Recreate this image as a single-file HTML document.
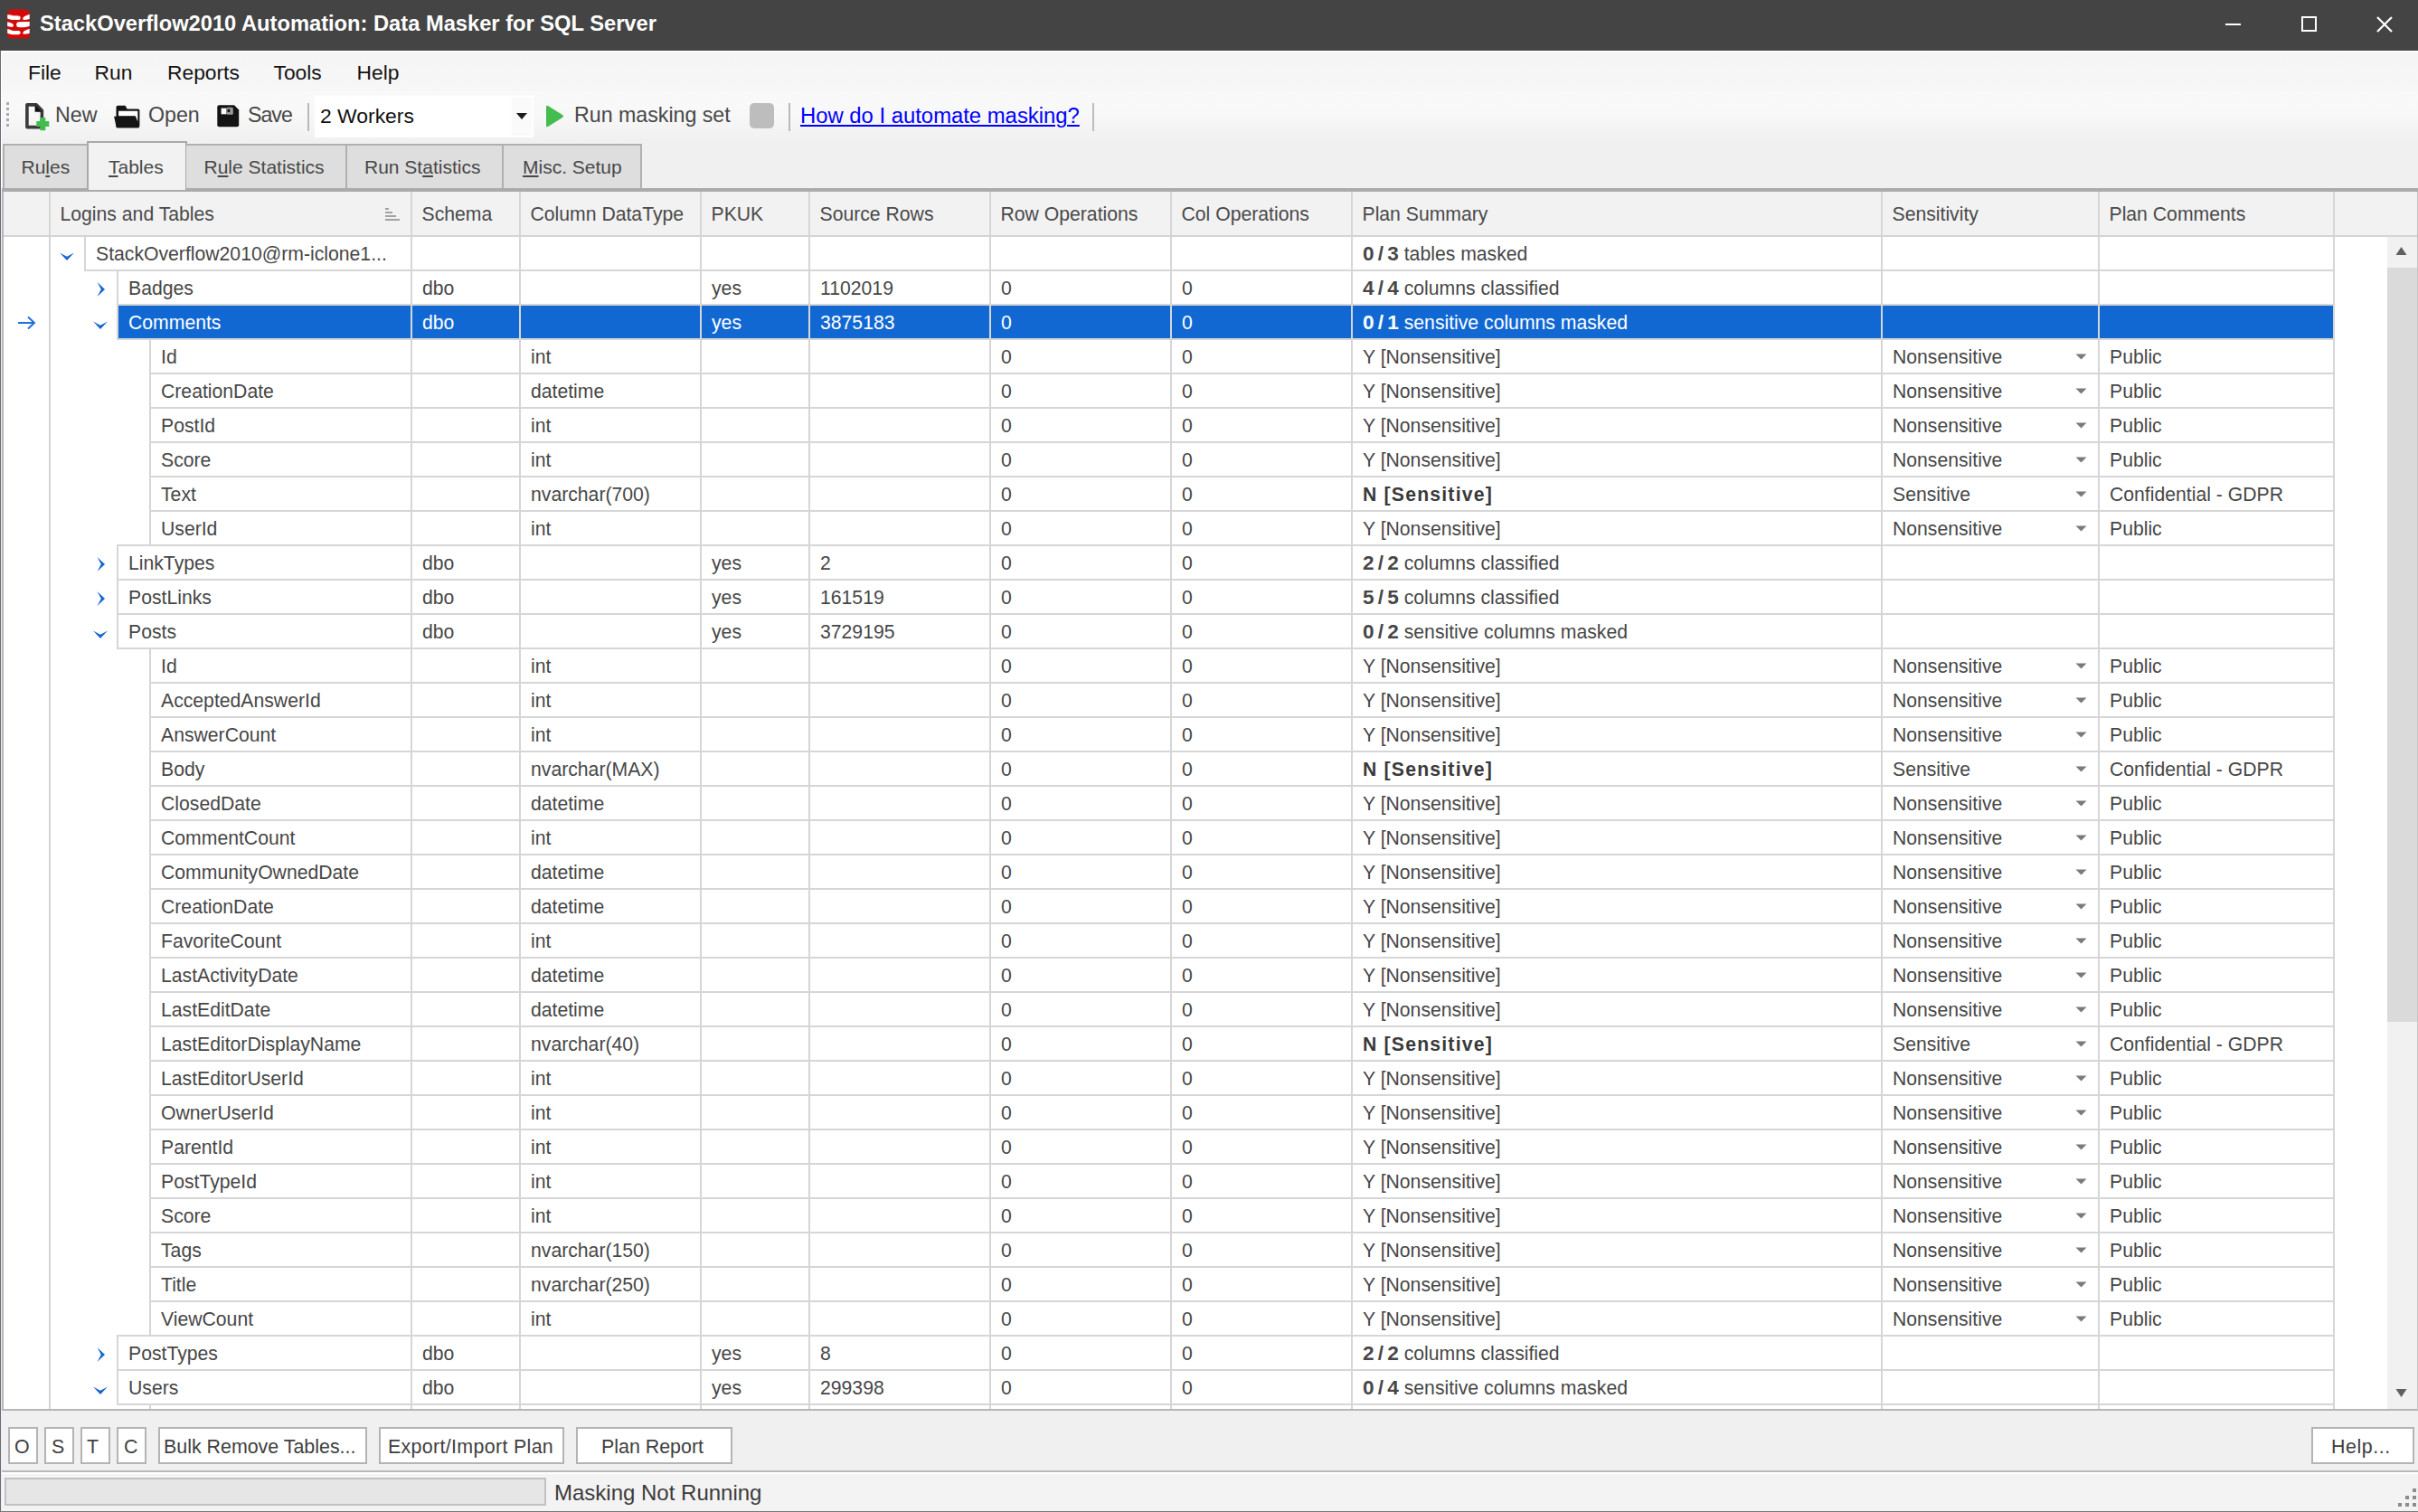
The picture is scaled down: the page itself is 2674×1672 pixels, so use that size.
<!DOCTYPE html><html><head><meta charset="utf-8"><style>
html,body{margin:0;padding:0;width:2674px;height:1672px;overflow:hidden;background:#f0f0f0;font-family:"Liberation Sans", sans-serif;}
div,span,svg{position:absolute;box-sizing:border-box;}
.t{white-space:nowrap;}
</style></head><body>
<div style="left:0px;top:0px;width:2674px;height:56px;background:#444444"></div>
<svg style="left:8px;top:10px" width="25" height="33" viewBox="0 0 25 33">
<path d="M3.5 0.3 L21.3 0.3 L24.7 3.8 L24.7 29.3 Q24.7 32.4 21 32.4 L4 32.4 Q0.2 32.4 0.2 29.3 L0.2 3.8 Z" fill="#d30a0a"/>
<g fill="#ffffff">
<path d="M0.2 6.3 Q3 5.8 6 7.3 L12.8 7.6 Q14.9 8 14.7 10.2 Q14.4 12.1 12.2 12.1 L6 12 Q3 11.8 0.2 10.6 Z"/>
<path d="M17.3 10.9 Q17.1 9 19.2 8.1 L24.7 5.8 L24.7 10.9 Q21 12 18.6 12 Q17.3 12 17.3 10.9 Z"/>
<path d="M0.2 14.3 Q3.2 14.8 5.6 16 Q7 16.9 6.9 18.3 Q6.7 19.9 5 19.9 L0.2 19.1 Z"/>
<path d="M10.2 16.2 Q10.4 14.3 13 14.3 L24.7 14.1 L24.7 18.7 Q21 20.3 14 20.3 Q10.2 20.3 10.2 18.1 Z"/>
<path d="M0.2 22 Q3 22.6 6 23.9 L12.8 24.1 Q14.9 24.5 14.7 26.6 Q14.4 28.3 12.2 28.3 L6 28.2 Q3 28 0.2 26.8 Z"/>
<path d="M17.3 26.8 Q17.1 25 19.2 24.1 L24.7 21.8 L24.7 26.9 Q21 27.7 18.6 27.7 Q17.3 27.7 17.3 26.8 Z"/>
</g></svg>
<span class="t" style="left:44px;top:15.44px;font-size:23.7px;line-height:23.7px;color:#ffffff;font-weight:700;">StackOverflow2010 Automation: Data Masker for SQL Server</span>
<div style="left:2461px;top:26px;width:17px;height:2px;background:#ffffff"></div>
<div style="left:2545px;top:18px;width:17px;height:17px;border:2px solid #ffffff"></div>
<svg style="left:2627px;top:17px" width="20" height="20" viewBox="0 0 20 20"><path d="M2 2 L18 18 M18 2 L2 18" stroke="#fff" stroke-width="2.2"/></svg>
<div style="left:0px;top:56px;width:1px;height:1616px;background:#676d76"></div>
<div style="left:1px;top:56px;width:1px;height:152px;background:#ffffff"></div>
<div style="left:2px;top:56px;width:2672px;height:2px;background:#ffffff"></div>
<div style="left:2px;top:58px;width:2672px;height:43px;background:linear-gradient(#f5f5f5,#f7f7f7)"></div>
<span class="t" style="left:31px;top:68.70px;font-size:22.8px;line-height:22.8px;color:#141414;font-weight:400;">File</span>
<span class="t" style="left:104.5px;top:68.70px;font-size:22.8px;line-height:22.8px;color:#141414;font-weight:400;">Run</span>
<span class="t" style="left:185px;top:68.70px;font-size:22.8px;line-height:22.8px;color:#141414;font-weight:400;">Reports</span>
<span class="t" style="left:302.5px;top:68.70px;font-size:22.8px;line-height:22.8px;color:#141414;font-weight:400;">Tools</span>
<span class="t" style="left:394.5px;top:68.70px;font-size:22.8px;line-height:22.8px;color:#141414;font-weight:400;">Help</span>
<div style="left:2px;top:101px;width:2672px;height:56px;background:linear-gradient(#f9f9f9,#f8f8f8 45%,#f0f0f0)"></div>
<div style="left:7px;top:113px;width:3px;height:3px;background:#a8a8a8"></div>
<div style="left:7px;top:119px;width:3px;height:3px;background:#a8a8a8"></div>
<div style="left:7px;top:125px;width:3px;height:3px;background:#a8a8a8"></div>
<div style="left:7px;top:131px;width:3px;height:3px;background:#a8a8a8"></div>
<div style="left:7px;top:137px;width:3px;height:3px;background:#a8a8a8"></div>
<svg style="left:26px;top:112px" width="32" height="34" viewBox="26 112 32 34">
<path d="M29.9 115.9 L40.3 115.9 L46.4 122.3 L46.4 140.6 L29.9 140.6 Z" fill="none" stroke="#3a3a3a" stroke-width="3.6" stroke-linejoin="round"/>
<path d="M38.6 116 L38.6 123.8 L46.3 123.8 Z" fill="#111"/>
<rect x="40.3" y="134" width="14" height="6" fill="#43bd4f"/><rect x="44.3" y="130" width="6" height="14.2" fill="#43bd4f"/>
</svg>
<span class="t" style="left:61px;top:116.36px;font-size:23.2px;line-height:23.2px;color:#474747;font-weight:400;">New</span>
<svg style="left:124px;top:114px" width="34" height="30" viewBox="124 114 34 30">
<path d="M128.5 118.5 Q128.5 116.7 130.3 116.7 L138.6 116.7 L140.6 120.4 L152.6 120.4 Q154.4 120.4 154.4 122.2 L154.4 139 Q154.4 141.2 152.4 141.2 L130 141.2 Q128.5 141.2 128.5 139.5 Z" fill="#141414"/>
<path d="M131.1 122.8 L152.3 122.8 L152.3 134.5 L149.8 128.2 L131.1 128.2 Z" fill="#ffffff"/>
<path d="M126.1 128.7 L149.4 128.7 L153.8 141.2 L128.8 141.2 Z" fill="#141414"/>
</svg>
<span class="t" style="left:164px;top:116.36px;font-size:23.2px;line-height:23.2px;color:#474747;font-weight:400;">Open</span>
<svg style="left:238px;top:114px" width="28" height="28" viewBox="238 114 28 28">
<path d="M240.3 118.2 Q240.3 116.2 242.3 116.2 L259 116.2 L264.2 121.4 L264.2 138.3 Q264.2 140.3 262.2 140.3 L242.3 140.3 Q240.3 140.3 240.3 138.3 Z" fill="#141414"/>
<rect x="244.6" y="119.6" width="5.8" height="6.7" fill="#ffffff"/>
<rect x="250.4" y="118.8" width="7.4" height="8" rx="1.2" fill="#9a9a9a"/>
<rect x="251.6" y="120.7" width="2.6" height="3.3" fill="#111"/>
</svg>
<span class="t" style="left:274px;top:116.36px;font-size:23.2px;line-height:23.2px;color:#474747;font-weight:400;letter-spacing:-1px">Save</span>
<div style="left:340px;top:114px;width:2px;height:31px;background:#b9b9b9"></div>
<div style="left:348px;top:106px;width:242px;height:46px;background:#ffffff"></div>
<div style="left:566px;top:108px;width:22px;height:42px;background:#fafafa"></div>
<span class="t" style="left:354px;top:116.62px;font-size:22.9px;line-height:22.9px;color:#111111;font-weight:400;">2 Workers</span>
<svg style="left:570px;top:124px" width="14" height="9" viewBox="0 0 14 9"><path d="M1 1 L13 1 L7 8 Z" fill="#1b1b1b"/></svg>
<svg style="left:601px;top:115px" width="24" height="27" viewBox="0 0 24 27"><path d="M3 3 Q3 1 5 2 L21 12 Q23 13.5 21 15 L5 25 Q3 26 3 24 Z" fill="#43bd4f"/></svg>
<span class="t" style="left:635px;top:116.36px;font-size:23.2px;line-height:23.2px;color:#474747;font-weight:400;">Run masking set</span>
<div style="left:829px;top:114px;width:27px;height:28px;background:#bdbdbd;border-radius:5px"></div>
<div style="left:872px;top:114px;width:2px;height:31px;background:#b9b9b9"></div>
<span class="t" style="left:885px;top:115.81px;font-size:23.85px;line-height:23.85px;color:#0000ff;font-weight:400;text-decoration:underline;text-decoration-thickness:1.6px;text-underline-offset:2px">How do I automate masking?</span>
<div style="left:1208px;top:114px;width:2px;height:31px;background:#bcbcbc"></div>
<div style="left:3px;top:159px;width:94px;height:50px;background:#dedede;border-top:2px solid #b0b0b0;border-left:2px solid #b0b0b0;border-right:none"></div>
<div style="left:96px;top:156px;width:111px;height:56px;background:#f2f2f2;border:2px solid #a9a9a9;border-bottom:none"></div>
<div style="left:206px;top:159px;width:176px;height:50px;background:#dedede;border-top:2px solid #b0b0b0;border-left:none;border-right:none"></div>
<div style="left:382px;top:159px;width:173px;height:50px;background:#dedede;border-top:2px solid #b0b0b0;border-left:2px solid #b0b0b0;border-right:none"></div>
<div style="left:555px;top:159px;width:155px;height:50px;background:#dedede;border-top:2px solid #b0b0b0;border-left:2px solid #b0b0b0;border-right:2px solid #b0b0b0"></div>
<span class="t" style="left:23.5px;top:174.22px;font-size:21px;line-height:21px;color:#484848;font-weight:400;">Ru<u>l</u>es</span>
<span class="t" style="left:120px;top:174.22px;font-size:21px;line-height:21px;color:#484848;font-weight:400;"><u>T</u>ables</span>
<span class="t" style="left:225.5px;top:174.22px;font-size:21px;line-height:21px;color:#484848;font-weight:400;">R<u>u</u>le Statistics</span>
<span class="t" style="left:403px;top:174.22px;font-size:21px;line-height:21px;color:#484848;font-weight:400;">Run St<u>a</u>tistics</span>
<span class="t" style="left:578px;top:174.22px;font-size:21px;line-height:21px;color:#484848;font-weight:400;"><u>M</u>isc. Setup</span>
<div style="left:2px;top:208px;width:2672px;height:4px;background:#ababab"></div>
<div style="left:98px;top:208px;width:107px;height:2px;background:#f2f2f2"></div>
<div style="left:96px;top:208px;width:2px;height:2px;background:#a9a9a9"></div>
<div style="left:205px;top:208px;width:2px;height:2px;background:#a9a9a9"></div>
<div style="left:2px;top:212px;width:2px;height:1348px;background:#b6b6b6"></div>
<div style="left:2673px;top:212px;width:1px;height:1348px;background:#c4c4c4"></div>
<div style="left:2px;top:1558px;width:2672px;height:2px;background:#b6b6b6"></div>
<div style="left:4px;top:212px;width:2669px;height:48px;background:#f2f2f2"></div>
<div style="left:4px;top:260px;width:2669px;height:2px;background:#d4d4d4"></div>
<div style="left:4px;top:262px;width:2636px;height:1296px;background:#ffffff"></div>
<div style="left:54px;top:212px;width:2px;height:48px;background:#d6d6d6"></div>
<div style="left:454px;top:212px;width:2px;height:48px;background:#d6d6d6"></div>
<div style="left:574px;top:212px;width:2px;height:48px;background:#d6d6d6"></div>
<div style="left:774px;top:212px;width:2px;height:48px;background:#d6d6d6"></div>
<div style="left:894px;top:212px;width:2px;height:48px;background:#d6d6d6"></div>
<div style="left:1094px;top:212px;width:2px;height:48px;background:#d6d6d6"></div>
<div style="left:1294px;top:212px;width:2px;height:48px;background:#d6d6d6"></div>
<div style="left:1494px;top:212px;width:2px;height:48px;background:#d6d6d6"></div>
<div style="left:2080px;top:212px;width:2px;height:48px;background:#d6d6d6"></div>
<div style="left:2320px;top:212px;width:2px;height:48px;background:#d6d6d6"></div>
<div style="left:2580px;top:212px;width:2px;height:48px;background:#d6d6d6"></div>
<span class="t" style="left:66.5px;top:226.05px;font-size:21.2px;line-height:21.2px;color:#4a4a4a;font-weight:400;">Logins and Tables</span>
<span class="t" style="left:466.5px;top:226.05px;font-size:21.2px;line-height:21.2px;color:#4a4a4a;font-weight:400;">Schema</span>
<span class="t" style="left:586.5px;top:226.05px;font-size:21.2px;line-height:21.2px;color:#4a4a4a;font-weight:400;">Column DataType</span>
<span class="t" style="left:786.5px;top:226.05px;font-size:21.2px;line-height:21.2px;color:#4a4a4a;font-weight:400;">PKUK</span>
<span class="t" style="left:906.5px;top:226.05px;font-size:21.2px;line-height:21.2px;color:#4a4a4a;font-weight:400;">Source Rows</span>
<span class="t" style="left:1106.5px;top:226.05px;font-size:21.2px;line-height:21.2px;color:#4a4a4a;font-weight:400;">Row Operations</span>
<span class="t" style="left:1306.5px;top:226.05px;font-size:21.2px;line-height:21.2px;color:#4a4a4a;font-weight:400;">Col Operations</span>
<span class="t" style="left:1506.5px;top:226.05px;font-size:21.2px;line-height:21.2px;color:#4a4a4a;font-weight:400;">Plan Summary</span>
<span class="t" style="left:2092.5px;top:226.05px;font-size:21.2px;line-height:21.2px;color:#4a4a4a;font-weight:400;">Sensitivity</span>
<span class="t" style="left:2332.5px;top:226.05px;font-size:21.2px;line-height:21.2px;color:#4a4a4a;font-weight:400;">Plan Comments</span>
<div style="left:426px;top:230px;width:4px;height:2px;background:#a3a3a3"></div>
<div style="left:426px;top:234px;width:8px;height:2px;background:#a3a3a3"></div>
<div style="left:426px;top:238px;width:12px;height:2px;background:#a3a3a3"></div>
<div style="left:426px;top:242px;width:16px;height:2px;background:#a3a3a3"></div>
<div style="left:93px;top:262px;width:2px;height:36px;background:#d6d6d6"></div>
<div style="left:454px;top:262px;width:2px;height:36px;background:#d6d6d6"></div>
<div style="left:574px;top:262px;width:2px;height:36px;background:#d6d6d6"></div>
<div style="left:774px;top:262px;width:2px;height:36px;background:#d6d6d6"></div>
<div style="left:894px;top:262px;width:2px;height:36px;background:#d6d6d6"></div>
<div style="left:1094px;top:262px;width:2px;height:36px;background:#d6d6d6"></div>
<div style="left:1294px;top:262px;width:2px;height:36px;background:#d6d6d6"></div>
<div style="left:1494px;top:262px;width:2px;height:36px;background:#d6d6d6"></div>
<div style="left:2080px;top:262px;width:2px;height:36px;background:#d6d6d6"></div>
<div style="left:2320px;top:262px;width:2px;height:36px;background:#d6d6d6"></div>
<div style="left:2580px;top:262px;width:2px;height:36px;background:#d6d6d6"></div>
<div style="left:93px;top:298px;width:2489px;height:2px;background:#d6d6d6"></div>
<svg style="left:65px;top:278px" width="18" height="12" viewBox="0 0 18 12"><path d="M1 1.5 L9 10 L17 1.5 L9 5.8 Z" fill="#1565d0"/></svg>
<span class="t" style="left:106px;top:269.65px;font-size:21.2px;line-height:21.2px;color:#474747;font-weight:400;">StackOverflow2010@rm-iclone1...</span>
<span class="t" style="left:1507px;top:269.65px;font-size:21.2px;line-height:21.2px;color:#474747;font-weight:400;"><b style="font-weight:700;letter-spacing:4.2px;font-size:22.6px">0/</b><b style="font-weight:700;font-size:22.6px">3</b> tables masked</span>
<div style="left:129px;top:300px;width:2px;height:36px;background:#d6d6d6"></div>
<div style="left:454px;top:300px;width:2px;height:36px;background:#d6d6d6"></div>
<div style="left:574px;top:300px;width:2px;height:36px;background:#d6d6d6"></div>
<div style="left:774px;top:300px;width:2px;height:36px;background:#d6d6d6"></div>
<div style="left:894px;top:300px;width:2px;height:36px;background:#d6d6d6"></div>
<div style="left:1094px;top:300px;width:2px;height:36px;background:#d6d6d6"></div>
<div style="left:1294px;top:300px;width:2px;height:36px;background:#d6d6d6"></div>
<div style="left:1494px;top:300px;width:2px;height:36px;background:#d6d6d6"></div>
<div style="left:2080px;top:300px;width:2px;height:36px;background:#d6d6d6"></div>
<div style="left:2320px;top:300px;width:2px;height:36px;background:#d6d6d6"></div>
<div style="left:2580px;top:300px;width:2px;height:36px;background:#d6d6d6"></div>
<div style="left:129px;top:336px;width:2453px;height:2px;background:#d6d6d6"></div>
<svg style="left:105.5px;top:311px" width="12" height="18" viewBox="0 0 12 18"><path d="M1.5 1 L10 9 L1.5 17 L5.8 9 Z" fill="#1565d0"/></svg>
<span class="t" style="left:142px;top:307.65px;font-size:21.2px;line-height:21.2px;color:#474747;font-weight:400;">Badges</span>
<span class="t" style="left:467px;top:307.65px;font-size:21.2px;line-height:21.2px;color:#474747;font-weight:400;">dbo</span>
<span class="t" style="left:787px;top:307.65px;font-size:21.2px;line-height:21.2px;color:#474747;font-weight:400;">yes</span>
<span class="t" style="left:907px;top:307.65px;font-size:21.2px;line-height:21.2px;color:#474747;font-weight:400;">1102019</span>
<span class="t" style="left:1107px;top:307.65px;font-size:21.2px;line-height:21.2px;color:#474747;font-weight:400;">0</span>
<span class="t" style="left:1307px;top:307.65px;font-size:21.2px;line-height:21.2px;color:#474747;font-weight:400;">0</span>
<span class="t" style="left:1507px;top:307.65px;font-size:21.2px;line-height:21.2px;color:#474747;font-weight:400;"><b style="font-weight:700;letter-spacing:4.2px;font-size:22.6px">4/</b><b style="font-weight:700;font-size:22.6px">4</b> columns classified</span>
<div style="left:129px;top:338px;width:2px;height:36px;background:#d6d6d6"></div>
<div style="left:454px;top:338px;width:2px;height:36px;background:#d6d6d6"></div>
<div style="left:574px;top:338px;width:2px;height:36px;background:#d6d6d6"></div>
<div style="left:774px;top:338px;width:2px;height:36px;background:#d6d6d6"></div>
<div style="left:894px;top:338px;width:2px;height:36px;background:#d6d6d6"></div>
<div style="left:1094px;top:338px;width:2px;height:36px;background:#d6d6d6"></div>
<div style="left:1294px;top:338px;width:2px;height:36px;background:#d6d6d6"></div>
<div style="left:1494px;top:338px;width:2px;height:36px;background:#d6d6d6"></div>
<div style="left:2080px;top:338px;width:2px;height:36px;background:#d6d6d6"></div>
<div style="left:2320px;top:338px;width:2px;height:36px;background:#d6d6d6"></div>
<div style="left:2580px;top:338px;width:2px;height:36px;background:#d6d6d6"></div>
<div style="left:131px;top:338px;width:323px;height:36px;background:#1268d3"></div>
<div style="left:456px;top:338px;width:118px;height:36px;background:#1268d3"></div>
<div style="left:576px;top:338px;width:198px;height:36px;background:#1268d3"></div>
<div style="left:776px;top:338px;width:118px;height:36px;background:#1268d3"></div>
<div style="left:896px;top:338px;width:198px;height:36px;background:#1268d3"></div>
<div style="left:1096px;top:338px;width:198px;height:36px;background:#1268d3"></div>
<div style="left:1296px;top:338px;width:198px;height:36px;background:#1268d3"></div>
<div style="left:1496px;top:338px;width:584px;height:36px;background:#1268d3"></div>
<div style="left:2082px;top:338px;width:238px;height:36px;background:#1268d3"></div>
<div style="left:2322px;top:338px;width:258px;height:36px;background:#1268d3"></div>
<div style="left:129px;top:374px;width:2453px;height:2px;background:#d6d6d6"></div>
<svg style="left:101.5px;top:354px" width="18" height="12" viewBox="0 0 18 12"><path d="M1 1.5 L9 10 L17 1.5 L9 5.8 Z" fill="#1565d0"/></svg>
<span class="t" style="left:142px;top:345.65px;font-size:21.2px;line-height:21.2px;color:#ffffff;font-weight:400;">Comments</span>
<span class="t" style="left:467px;top:345.65px;font-size:21.2px;line-height:21.2px;color:#ffffff;font-weight:400;">dbo</span>
<span class="t" style="left:787px;top:345.65px;font-size:21.2px;line-height:21.2px;color:#ffffff;font-weight:400;">yes</span>
<span class="t" style="left:907px;top:345.65px;font-size:21.2px;line-height:21.2px;color:#ffffff;font-weight:400;">3875183</span>
<span class="t" style="left:1107px;top:345.65px;font-size:21.2px;line-height:21.2px;color:#ffffff;font-weight:400;">0</span>
<span class="t" style="left:1307px;top:345.65px;font-size:21.2px;line-height:21.2px;color:#ffffff;font-weight:400;">0</span>
<span class="t" style="left:1507px;top:345.65px;font-size:21.2px;line-height:21.2px;color:#ffffff;font-weight:400;"><b style="font-weight:700;letter-spacing:4.2px;font-size:22.6px">0/</b><b style="font-weight:700;font-size:22.6px">1</b> sensitive columns masked</span>
<div style="left:165px;top:376px;width:2px;height:36px;background:#d6d6d6"></div>
<div style="left:454px;top:376px;width:2px;height:36px;background:#d6d6d6"></div>
<div style="left:574px;top:376px;width:2px;height:36px;background:#d6d6d6"></div>
<div style="left:774px;top:376px;width:2px;height:36px;background:#d6d6d6"></div>
<div style="left:894px;top:376px;width:2px;height:36px;background:#d6d6d6"></div>
<div style="left:1094px;top:376px;width:2px;height:36px;background:#d6d6d6"></div>
<div style="left:1294px;top:376px;width:2px;height:36px;background:#d6d6d6"></div>
<div style="left:1494px;top:376px;width:2px;height:36px;background:#d6d6d6"></div>
<div style="left:2080px;top:376px;width:2px;height:36px;background:#d6d6d6"></div>
<div style="left:2320px;top:376px;width:2px;height:36px;background:#d6d6d6"></div>
<div style="left:2580px;top:376px;width:2px;height:36px;background:#d6d6d6"></div>
<div style="left:165px;top:412px;width:2417px;height:2px;background:#d6d6d6"></div>
<span class="t" style="left:178px;top:383.65px;font-size:21.2px;line-height:21.2px;color:#474747;font-weight:400;">Id</span>
<span class="t" style="left:587px;top:383.65px;font-size:21.2px;line-height:21.2px;color:#474747;font-weight:400;">int</span>
<span class="t" style="left:1107px;top:383.65px;font-size:21.2px;line-height:21.2px;color:#474747;font-weight:400;">0</span>
<span class="t" style="left:1307px;top:383.65px;font-size:21.2px;line-height:21.2px;color:#474747;font-weight:400;">0</span>
<span class="t" style="left:1507px;top:383.65px;font-size:21.2px;line-height:21.2px;color:#474747;font-weight:400;">Y [Nonsensitive]</span>
<span class="t" style="left:2093px;top:383.65px;font-size:21.2px;line-height:21.2px;color:#474747;font-weight:400;">Nonsensitive</span>
<span class="t" style="left:2333px;top:383.65px;font-size:21.2px;line-height:21.2px;color:#474747;font-weight:400;">Public</span>
<svg style="left:2295px;top:391px" width="13" height="8" viewBox="0 0 13 8"><path d="M0.5 0.5 L12.5 0.5 L6.5 6.5 Z" fill="#7a7a7a"/></svg>
<div style="left:165px;top:414px;width:2px;height:36px;background:#d6d6d6"></div>
<div style="left:454px;top:414px;width:2px;height:36px;background:#d6d6d6"></div>
<div style="left:574px;top:414px;width:2px;height:36px;background:#d6d6d6"></div>
<div style="left:774px;top:414px;width:2px;height:36px;background:#d6d6d6"></div>
<div style="left:894px;top:414px;width:2px;height:36px;background:#d6d6d6"></div>
<div style="left:1094px;top:414px;width:2px;height:36px;background:#d6d6d6"></div>
<div style="left:1294px;top:414px;width:2px;height:36px;background:#d6d6d6"></div>
<div style="left:1494px;top:414px;width:2px;height:36px;background:#d6d6d6"></div>
<div style="left:2080px;top:414px;width:2px;height:36px;background:#d6d6d6"></div>
<div style="left:2320px;top:414px;width:2px;height:36px;background:#d6d6d6"></div>
<div style="left:2580px;top:414px;width:2px;height:36px;background:#d6d6d6"></div>
<div style="left:165px;top:450px;width:2417px;height:2px;background:#d6d6d6"></div>
<span class="t" style="left:178px;top:421.65px;font-size:21.2px;line-height:21.2px;color:#474747;font-weight:400;">CreationDate</span>
<span class="t" style="left:587px;top:421.65px;font-size:21.2px;line-height:21.2px;color:#474747;font-weight:400;">datetime</span>
<span class="t" style="left:1107px;top:421.65px;font-size:21.2px;line-height:21.2px;color:#474747;font-weight:400;">0</span>
<span class="t" style="left:1307px;top:421.65px;font-size:21.2px;line-height:21.2px;color:#474747;font-weight:400;">0</span>
<span class="t" style="left:1507px;top:421.65px;font-size:21.2px;line-height:21.2px;color:#474747;font-weight:400;">Y [Nonsensitive]</span>
<span class="t" style="left:2093px;top:421.65px;font-size:21.2px;line-height:21.2px;color:#474747;font-weight:400;">Nonsensitive</span>
<span class="t" style="left:2333px;top:421.65px;font-size:21.2px;line-height:21.2px;color:#474747;font-weight:400;">Public</span>
<svg style="left:2295px;top:429px" width="13" height="8" viewBox="0 0 13 8"><path d="M0.5 0.5 L12.5 0.5 L6.5 6.5 Z" fill="#7a7a7a"/></svg>
<div style="left:165px;top:452px;width:2px;height:36px;background:#d6d6d6"></div>
<div style="left:454px;top:452px;width:2px;height:36px;background:#d6d6d6"></div>
<div style="left:574px;top:452px;width:2px;height:36px;background:#d6d6d6"></div>
<div style="left:774px;top:452px;width:2px;height:36px;background:#d6d6d6"></div>
<div style="left:894px;top:452px;width:2px;height:36px;background:#d6d6d6"></div>
<div style="left:1094px;top:452px;width:2px;height:36px;background:#d6d6d6"></div>
<div style="left:1294px;top:452px;width:2px;height:36px;background:#d6d6d6"></div>
<div style="left:1494px;top:452px;width:2px;height:36px;background:#d6d6d6"></div>
<div style="left:2080px;top:452px;width:2px;height:36px;background:#d6d6d6"></div>
<div style="left:2320px;top:452px;width:2px;height:36px;background:#d6d6d6"></div>
<div style="left:2580px;top:452px;width:2px;height:36px;background:#d6d6d6"></div>
<div style="left:165px;top:488px;width:2417px;height:2px;background:#d6d6d6"></div>
<span class="t" style="left:178px;top:459.65px;font-size:21.2px;line-height:21.2px;color:#474747;font-weight:400;">PostId</span>
<span class="t" style="left:587px;top:459.65px;font-size:21.2px;line-height:21.2px;color:#474747;font-weight:400;">int</span>
<span class="t" style="left:1107px;top:459.65px;font-size:21.2px;line-height:21.2px;color:#474747;font-weight:400;">0</span>
<span class="t" style="left:1307px;top:459.65px;font-size:21.2px;line-height:21.2px;color:#474747;font-weight:400;">0</span>
<span class="t" style="left:1507px;top:459.65px;font-size:21.2px;line-height:21.2px;color:#474747;font-weight:400;">Y [Nonsensitive]</span>
<span class="t" style="left:2093px;top:459.65px;font-size:21.2px;line-height:21.2px;color:#474747;font-weight:400;">Nonsensitive</span>
<span class="t" style="left:2333px;top:459.65px;font-size:21.2px;line-height:21.2px;color:#474747;font-weight:400;">Public</span>
<svg style="left:2295px;top:467px" width="13" height="8" viewBox="0 0 13 8"><path d="M0.5 0.5 L12.5 0.5 L6.5 6.5 Z" fill="#7a7a7a"/></svg>
<div style="left:165px;top:490px;width:2px;height:36px;background:#d6d6d6"></div>
<div style="left:454px;top:490px;width:2px;height:36px;background:#d6d6d6"></div>
<div style="left:574px;top:490px;width:2px;height:36px;background:#d6d6d6"></div>
<div style="left:774px;top:490px;width:2px;height:36px;background:#d6d6d6"></div>
<div style="left:894px;top:490px;width:2px;height:36px;background:#d6d6d6"></div>
<div style="left:1094px;top:490px;width:2px;height:36px;background:#d6d6d6"></div>
<div style="left:1294px;top:490px;width:2px;height:36px;background:#d6d6d6"></div>
<div style="left:1494px;top:490px;width:2px;height:36px;background:#d6d6d6"></div>
<div style="left:2080px;top:490px;width:2px;height:36px;background:#d6d6d6"></div>
<div style="left:2320px;top:490px;width:2px;height:36px;background:#d6d6d6"></div>
<div style="left:2580px;top:490px;width:2px;height:36px;background:#d6d6d6"></div>
<div style="left:165px;top:526px;width:2417px;height:2px;background:#d6d6d6"></div>
<span class="t" style="left:178px;top:497.65px;font-size:21.2px;line-height:21.2px;color:#474747;font-weight:400;">Score</span>
<span class="t" style="left:587px;top:497.65px;font-size:21.2px;line-height:21.2px;color:#474747;font-weight:400;">int</span>
<span class="t" style="left:1107px;top:497.65px;font-size:21.2px;line-height:21.2px;color:#474747;font-weight:400;">0</span>
<span class="t" style="left:1307px;top:497.65px;font-size:21.2px;line-height:21.2px;color:#474747;font-weight:400;">0</span>
<span class="t" style="left:1507px;top:497.65px;font-size:21.2px;line-height:21.2px;color:#474747;font-weight:400;">Y [Nonsensitive]</span>
<span class="t" style="left:2093px;top:497.65px;font-size:21.2px;line-height:21.2px;color:#474747;font-weight:400;">Nonsensitive</span>
<span class="t" style="left:2333px;top:497.65px;font-size:21.2px;line-height:21.2px;color:#474747;font-weight:400;">Public</span>
<svg style="left:2295px;top:505px" width="13" height="8" viewBox="0 0 13 8"><path d="M0.5 0.5 L12.5 0.5 L6.5 6.5 Z" fill="#7a7a7a"/></svg>
<div style="left:165px;top:528px;width:2px;height:36px;background:#d6d6d6"></div>
<div style="left:454px;top:528px;width:2px;height:36px;background:#d6d6d6"></div>
<div style="left:574px;top:528px;width:2px;height:36px;background:#d6d6d6"></div>
<div style="left:774px;top:528px;width:2px;height:36px;background:#d6d6d6"></div>
<div style="left:894px;top:528px;width:2px;height:36px;background:#d6d6d6"></div>
<div style="left:1094px;top:528px;width:2px;height:36px;background:#d6d6d6"></div>
<div style="left:1294px;top:528px;width:2px;height:36px;background:#d6d6d6"></div>
<div style="left:1494px;top:528px;width:2px;height:36px;background:#d6d6d6"></div>
<div style="left:2080px;top:528px;width:2px;height:36px;background:#d6d6d6"></div>
<div style="left:2320px;top:528px;width:2px;height:36px;background:#d6d6d6"></div>
<div style="left:2580px;top:528px;width:2px;height:36px;background:#d6d6d6"></div>
<div style="left:165px;top:564px;width:2417px;height:2px;background:#d6d6d6"></div>
<span class="t" style="left:178px;top:535.65px;font-size:21.2px;line-height:21.2px;color:#474747;font-weight:400;">Text</span>
<span class="t" style="left:587px;top:535.65px;font-size:21.2px;line-height:21.2px;color:#474747;font-weight:400;">nvarchar(700)</span>
<span class="t" style="left:1107px;top:535.65px;font-size:21.2px;line-height:21.2px;color:#474747;font-weight:400;">0</span>
<span class="t" style="left:1307px;top:535.65px;font-size:21.2px;line-height:21.2px;color:#474747;font-weight:400;">0</span>
<span class="t" style="left:1507px;top:535.65px;font-size:21.2px;line-height:21.2px;color:#3a3a3a;font-weight:700;letter-spacing:1.2px">N [Sensitive]</span>
<span class="t" style="left:2093px;top:535.65px;font-size:21.2px;line-height:21.2px;color:#474747;font-weight:400;">Sensitive</span>
<span class="t" style="left:2333px;top:535.65px;font-size:21.2px;line-height:21.2px;color:#474747;font-weight:400;">Confidential - GDPR</span>
<svg style="left:2295px;top:543px" width="13" height="8" viewBox="0 0 13 8"><path d="M0.5 0.5 L12.5 0.5 L6.5 6.5 Z" fill="#7a7a7a"/></svg>
<div style="left:165px;top:566px;width:2px;height:36px;background:#d6d6d6"></div>
<div style="left:454px;top:566px;width:2px;height:36px;background:#d6d6d6"></div>
<div style="left:574px;top:566px;width:2px;height:36px;background:#d6d6d6"></div>
<div style="left:774px;top:566px;width:2px;height:36px;background:#d6d6d6"></div>
<div style="left:894px;top:566px;width:2px;height:36px;background:#d6d6d6"></div>
<div style="left:1094px;top:566px;width:2px;height:36px;background:#d6d6d6"></div>
<div style="left:1294px;top:566px;width:2px;height:36px;background:#d6d6d6"></div>
<div style="left:1494px;top:566px;width:2px;height:36px;background:#d6d6d6"></div>
<div style="left:2080px;top:566px;width:2px;height:36px;background:#d6d6d6"></div>
<div style="left:2320px;top:566px;width:2px;height:36px;background:#d6d6d6"></div>
<div style="left:2580px;top:566px;width:2px;height:36px;background:#d6d6d6"></div>
<div style="left:129px;top:602px;width:2453px;height:2px;background:#d6d6d6"></div>
<span class="t" style="left:178px;top:573.65px;font-size:21.2px;line-height:21.2px;color:#474747;font-weight:400;">UserId</span>
<span class="t" style="left:587px;top:573.65px;font-size:21.2px;line-height:21.2px;color:#474747;font-weight:400;">int</span>
<span class="t" style="left:1107px;top:573.65px;font-size:21.2px;line-height:21.2px;color:#474747;font-weight:400;">0</span>
<span class="t" style="left:1307px;top:573.65px;font-size:21.2px;line-height:21.2px;color:#474747;font-weight:400;">0</span>
<span class="t" style="left:1507px;top:573.65px;font-size:21.2px;line-height:21.2px;color:#474747;font-weight:400;">Y [Nonsensitive]</span>
<span class="t" style="left:2093px;top:573.65px;font-size:21.2px;line-height:21.2px;color:#474747;font-weight:400;">Nonsensitive</span>
<span class="t" style="left:2333px;top:573.65px;font-size:21.2px;line-height:21.2px;color:#474747;font-weight:400;">Public</span>
<svg style="left:2295px;top:581px" width="13" height="8" viewBox="0 0 13 8"><path d="M0.5 0.5 L12.5 0.5 L6.5 6.5 Z" fill="#7a7a7a"/></svg>
<div style="left:129px;top:604px;width:2px;height:36px;background:#d6d6d6"></div>
<div style="left:454px;top:604px;width:2px;height:36px;background:#d6d6d6"></div>
<div style="left:574px;top:604px;width:2px;height:36px;background:#d6d6d6"></div>
<div style="left:774px;top:604px;width:2px;height:36px;background:#d6d6d6"></div>
<div style="left:894px;top:604px;width:2px;height:36px;background:#d6d6d6"></div>
<div style="left:1094px;top:604px;width:2px;height:36px;background:#d6d6d6"></div>
<div style="left:1294px;top:604px;width:2px;height:36px;background:#d6d6d6"></div>
<div style="left:1494px;top:604px;width:2px;height:36px;background:#d6d6d6"></div>
<div style="left:2080px;top:604px;width:2px;height:36px;background:#d6d6d6"></div>
<div style="left:2320px;top:604px;width:2px;height:36px;background:#d6d6d6"></div>
<div style="left:2580px;top:604px;width:2px;height:36px;background:#d6d6d6"></div>
<div style="left:129px;top:640px;width:2453px;height:2px;background:#d6d6d6"></div>
<svg style="left:105.5px;top:615px" width="12" height="18" viewBox="0 0 12 18"><path d="M1.5 1 L10 9 L1.5 17 L5.8 9 Z" fill="#1565d0"/></svg>
<span class="t" style="left:142px;top:611.65px;font-size:21.2px;line-height:21.2px;color:#474747;font-weight:400;">LinkTypes</span>
<span class="t" style="left:467px;top:611.65px;font-size:21.2px;line-height:21.2px;color:#474747;font-weight:400;">dbo</span>
<span class="t" style="left:787px;top:611.65px;font-size:21.2px;line-height:21.2px;color:#474747;font-weight:400;">yes</span>
<span class="t" style="left:907px;top:611.65px;font-size:21.2px;line-height:21.2px;color:#474747;font-weight:400;">2</span>
<span class="t" style="left:1107px;top:611.65px;font-size:21.2px;line-height:21.2px;color:#474747;font-weight:400;">0</span>
<span class="t" style="left:1307px;top:611.65px;font-size:21.2px;line-height:21.2px;color:#474747;font-weight:400;">0</span>
<span class="t" style="left:1507px;top:611.65px;font-size:21.2px;line-height:21.2px;color:#474747;font-weight:400;"><b style="font-weight:700;letter-spacing:4.2px;font-size:22.6px">2/</b><b style="font-weight:700;font-size:22.6px">2</b> columns classified</span>
<div style="left:129px;top:642px;width:2px;height:36px;background:#d6d6d6"></div>
<div style="left:454px;top:642px;width:2px;height:36px;background:#d6d6d6"></div>
<div style="left:574px;top:642px;width:2px;height:36px;background:#d6d6d6"></div>
<div style="left:774px;top:642px;width:2px;height:36px;background:#d6d6d6"></div>
<div style="left:894px;top:642px;width:2px;height:36px;background:#d6d6d6"></div>
<div style="left:1094px;top:642px;width:2px;height:36px;background:#d6d6d6"></div>
<div style="left:1294px;top:642px;width:2px;height:36px;background:#d6d6d6"></div>
<div style="left:1494px;top:642px;width:2px;height:36px;background:#d6d6d6"></div>
<div style="left:2080px;top:642px;width:2px;height:36px;background:#d6d6d6"></div>
<div style="left:2320px;top:642px;width:2px;height:36px;background:#d6d6d6"></div>
<div style="left:2580px;top:642px;width:2px;height:36px;background:#d6d6d6"></div>
<div style="left:129px;top:678px;width:2453px;height:2px;background:#d6d6d6"></div>
<svg style="left:105.5px;top:653px" width="12" height="18" viewBox="0 0 12 18"><path d="M1.5 1 L10 9 L1.5 17 L5.8 9 Z" fill="#1565d0"/></svg>
<span class="t" style="left:142px;top:649.65px;font-size:21.2px;line-height:21.2px;color:#474747;font-weight:400;">PostLinks</span>
<span class="t" style="left:467px;top:649.65px;font-size:21.2px;line-height:21.2px;color:#474747;font-weight:400;">dbo</span>
<span class="t" style="left:787px;top:649.65px;font-size:21.2px;line-height:21.2px;color:#474747;font-weight:400;">yes</span>
<span class="t" style="left:907px;top:649.65px;font-size:21.2px;line-height:21.2px;color:#474747;font-weight:400;">161519</span>
<span class="t" style="left:1107px;top:649.65px;font-size:21.2px;line-height:21.2px;color:#474747;font-weight:400;">0</span>
<span class="t" style="left:1307px;top:649.65px;font-size:21.2px;line-height:21.2px;color:#474747;font-weight:400;">0</span>
<span class="t" style="left:1507px;top:649.65px;font-size:21.2px;line-height:21.2px;color:#474747;font-weight:400;"><b style="font-weight:700;letter-spacing:4.2px;font-size:22.6px">5/</b><b style="font-weight:700;font-size:22.6px">5</b> columns classified</span>
<div style="left:129px;top:680px;width:2px;height:36px;background:#d6d6d6"></div>
<div style="left:454px;top:680px;width:2px;height:36px;background:#d6d6d6"></div>
<div style="left:574px;top:680px;width:2px;height:36px;background:#d6d6d6"></div>
<div style="left:774px;top:680px;width:2px;height:36px;background:#d6d6d6"></div>
<div style="left:894px;top:680px;width:2px;height:36px;background:#d6d6d6"></div>
<div style="left:1094px;top:680px;width:2px;height:36px;background:#d6d6d6"></div>
<div style="left:1294px;top:680px;width:2px;height:36px;background:#d6d6d6"></div>
<div style="left:1494px;top:680px;width:2px;height:36px;background:#d6d6d6"></div>
<div style="left:2080px;top:680px;width:2px;height:36px;background:#d6d6d6"></div>
<div style="left:2320px;top:680px;width:2px;height:36px;background:#d6d6d6"></div>
<div style="left:2580px;top:680px;width:2px;height:36px;background:#d6d6d6"></div>
<div style="left:129px;top:716px;width:2453px;height:2px;background:#d6d6d6"></div>
<svg style="left:101.5px;top:696px" width="18" height="12" viewBox="0 0 18 12"><path d="M1 1.5 L9 10 L17 1.5 L9 5.8 Z" fill="#1565d0"/></svg>
<span class="t" style="left:142px;top:687.65px;font-size:21.2px;line-height:21.2px;color:#474747;font-weight:400;">Posts</span>
<span class="t" style="left:467px;top:687.65px;font-size:21.2px;line-height:21.2px;color:#474747;font-weight:400;">dbo</span>
<span class="t" style="left:787px;top:687.65px;font-size:21.2px;line-height:21.2px;color:#474747;font-weight:400;">yes</span>
<span class="t" style="left:907px;top:687.65px;font-size:21.2px;line-height:21.2px;color:#474747;font-weight:400;">3729195</span>
<span class="t" style="left:1107px;top:687.65px;font-size:21.2px;line-height:21.2px;color:#474747;font-weight:400;">0</span>
<span class="t" style="left:1307px;top:687.65px;font-size:21.2px;line-height:21.2px;color:#474747;font-weight:400;">0</span>
<span class="t" style="left:1507px;top:687.65px;font-size:21.2px;line-height:21.2px;color:#474747;font-weight:400;"><b style="font-weight:700;letter-spacing:4.2px;font-size:22.6px">0/</b><b style="font-weight:700;font-size:22.6px">2</b> sensitive columns masked</span>
<div style="left:165px;top:718px;width:2px;height:36px;background:#d6d6d6"></div>
<div style="left:454px;top:718px;width:2px;height:36px;background:#d6d6d6"></div>
<div style="left:574px;top:718px;width:2px;height:36px;background:#d6d6d6"></div>
<div style="left:774px;top:718px;width:2px;height:36px;background:#d6d6d6"></div>
<div style="left:894px;top:718px;width:2px;height:36px;background:#d6d6d6"></div>
<div style="left:1094px;top:718px;width:2px;height:36px;background:#d6d6d6"></div>
<div style="left:1294px;top:718px;width:2px;height:36px;background:#d6d6d6"></div>
<div style="left:1494px;top:718px;width:2px;height:36px;background:#d6d6d6"></div>
<div style="left:2080px;top:718px;width:2px;height:36px;background:#d6d6d6"></div>
<div style="left:2320px;top:718px;width:2px;height:36px;background:#d6d6d6"></div>
<div style="left:2580px;top:718px;width:2px;height:36px;background:#d6d6d6"></div>
<div style="left:165px;top:754px;width:2417px;height:2px;background:#d6d6d6"></div>
<span class="t" style="left:178px;top:725.65px;font-size:21.2px;line-height:21.2px;color:#474747;font-weight:400;">Id</span>
<span class="t" style="left:587px;top:725.65px;font-size:21.2px;line-height:21.2px;color:#474747;font-weight:400;">int</span>
<span class="t" style="left:1107px;top:725.65px;font-size:21.2px;line-height:21.2px;color:#474747;font-weight:400;">0</span>
<span class="t" style="left:1307px;top:725.65px;font-size:21.2px;line-height:21.2px;color:#474747;font-weight:400;">0</span>
<span class="t" style="left:1507px;top:725.65px;font-size:21.2px;line-height:21.2px;color:#474747;font-weight:400;">Y [Nonsensitive]</span>
<span class="t" style="left:2093px;top:725.65px;font-size:21.2px;line-height:21.2px;color:#474747;font-weight:400;">Nonsensitive</span>
<span class="t" style="left:2333px;top:725.65px;font-size:21.2px;line-height:21.2px;color:#474747;font-weight:400;">Public</span>
<svg style="left:2295px;top:733px" width="13" height="8" viewBox="0 0 13 8"><path d="M0.5 0.5 L12.5 0.5 L6.5 6.5 Z" fill="#7a7a7a"/></svg>
<div style="left:165px;top:756px;width:2px;height:36px;background:#d6d6d6"></div>
<div style="left:454px;top:756px;width:2px;height:36px;background:#d6d6d6"></div>
<div style="left:574px;top:756px;width:2px;height:36px;background:#d6d6d6"></div>
<div style="left:774px;top:756px;width:2px;height:36px;background:#d6d6d6"></div>
<div style="left:894px;top:756px;width:2px;height:36px;background:#d6d6d6"></div>
<div style="left:1094px;top:756px;width:2px;height:36px;background:#d6d6d6"></div>
<div style="left:1294px;top:756px;width:2px;height:36px;background:#d6d6d6"></div>
<div style="left:1494px;top:756px;width:2px;height:36px;background:#d6d6d6"></div>
<div style="left:2080px;top:756px;width:2px;height:36px;background:#d6d6d6"></div>
<div style="left:2320px;top:756px;width:2px;height:36px;background:#d6d6d6"></div>
<div style="left:2580px;top:756px;width:2px;height:36px;background:#d6d6d6"></div>
<div style="left:165px;top:792px;width:2417px;height:2px;background:#d6d6d6"></div>
<span class="t" style="left:178px;top:763.65px;font-size:21.2px;line-height:21.2px;color:#474747;font-weight:400;">AcceptedAnswerId</span>
<span class="t" style="left:587px;top:763.65px;font-size:21.2px;line-height:21.2px;color:#474747;font-weight:400;">int</span>
<span class="t" style="left:1107px;top:763.65px;font-size:21.2px;line-height:21.2px;color:#474747;font-weight:400;">0</span>
<span class="t" style="left:1307px;top:763.65px;font-size:21.2px;line-height:21.2px;color:#474747;font-weight:400;">0</span>
<span class="t" style="left:1507px;top:763.65px;font-size:21.2px;line-height:21.2px;color:#474747;font-weight:400;">Y [Nonsensitive]</span>
<span class="t" style="left:2093px;top:763.65px;font-size:21.2px;line-height:21.2px;color:#474747;font-weight:400;">Nonsensitive</span>
<span class="t" style="left:2333px;top:763.65px;font-size:21.2px;line-height:21.2px;color:#474747;font-weight:400;">Public</span>
<svg style="left:2295px;top:771px" width="13" height="8" viewBox="0 0 13 8"><path d="M0.5 0.5 L12.5 0.5 L6.5 6.5 Z" fill="#7a7a7a"/></svg>
<div style="left:165px;top:794px;width:2px;height:36px;background:#d6d6d6"></div>
<div style="left:454px;top:794px;width:2px;height:36px;background:#d6d6d6"></div>
<div style="left:574px;top:794px;width:2px;height:36px;background:#d6d6d6"></div>
<div style="left:774px;top:794px;width:2px;height:36px;background:#d6d6d6"></div>
<div style="left:894px;top:794px;width:2px;height:36px;background:#d6d6d6"></div>
<div style="left:1094px;top:794px;width:2px;height:36px;background:#d6d6d6"></div>
<div style="left:1294px;top:794px;width:2px;height:36px;background:#d6d6d6"></div>
<div style="left:1494px;top:794px;width:2px;height:36px;background:#d6d6d6"></div>
<div style="left:2080px;top:794px;width:2px;height:36px;background:#d6d6d6"></div>
<div style="left:2320px;top:794px;width:2px;height:36px;background:#d6d6d6"></div>
<div style="left:2580px;top:794px;width:2px;height:36px;background:#d6d6d6"></div>
<div style="left:165px;top:830px;width:2417px;height:2px;background:#d6d6d6"></div>
<span class="t" style="left:178px;top:801.65px;font-size:21.2px;line-height:21.2px;color:#474747;font-weight:400;">AnswerCount</span>
<span class="t" style="left:587px;top:801.65px;font-size:21.2px;line-height:21.2px;color:#474747;font-weight:400;">int</span>
<span class="t" style="left:1107px;top:801.65px;font-size:21.2px;line-height:21.2px;color:#474747;font-weight:400;">0</span>
<span class="t" style="left:1307px;top:801.65px;font-size:21.2px;line-height:21.2px;color:#474747;font-weight:400;">0</span>
<span class="t" style="left:1507px;top:801.65px;font-size:21.2px;line-height:21.2px;color:#474747;font-weight:400;">Y [Nonsensitive]</span>
<span class="t" style="left:2093px;top:801.65px;font-size:21.2px;line-height:21.2px;color:#474747;font-weight:400;">Nonsensitive</span>
<span class="t" style="left:2333px;top:801.65px;font-size:21.2px;line-height:21.2px;color:#474747;font-weight:400;">Public</span>
<svg style="left:2295px;top:809px" width="13" height="8" viewBox="0 0 13 8"><path d="M0.5 0.5 L12.5 0.5 L6.5 6.5 Z" fill="#7a7a7a"/></svg>
<div style="left:165px;top:832px;width:2px;height:36px;background:#d6d6d6"></div>
<div style="left:454px;top:832px;width:2px;height:36px;background:#d6d6d6"></div>
<div style="left:574px;top:832px;width:2px;height:36px;background:#d6d6d6"></div>
<div style="left:774px;top:832px;width:2px;height:36px;background:#d6d6d6"></div>
<div style="left:894px;top:832px;width:2px;height:36px;background:#d6d6d6"></div>
<div style="left:1094px;top:832px;width:2px;height:36px;background:#d6d6d6"></div>
<div style="left:1294px;top:832px;width:2px;height:36px;background:#d6d6d6"></div>
<div style="left:1494px;top:832px;width:2px;height:36px;background:#d6d6d6"></div>
<div style="left:2080px;top:832px;width:2px;height:36px;background:#d6d6d6"></div>
<div style="left:2320px;top:832px;width:2px;height:36px;background:#d6d6d6"></div>
<div style="left:2580px;top:832px;width:2px;height:36px;background:#d6d6d6"></div>
<div style="left:165px;top:868px;width:2417px;height:2px;background:#d6d6d6"></div>
<span class="t" style="left:178px;top:839.65px;font-size:21.2px;line-height:21.2px;color:#474747;font-weight:400;">Body</span>
<span class="t" style="left:587px;top:839.65px;font-size:21.2px;line-height:21.2px;color:#474747;font-weight:400;">nvarchar(MAX)</span>
<span class="t" style="left:1107px;top:839.65px;font-size:21.2px;line-height:21.2px;color:#474747;font-weight:400;">0</span>
<span class="t" style="left:1307px;top:839.65px;font-size:21.2px;line-height:21.2px;color:#474747;font-weight:400;">0</span>
<span class="t" style="left:1507px;top:839.65px;font-size:21.2px;line-height:21.2px;color:#3a3a3a;font-weight:700;letter-spacing:1.2px">N [Sensitive]</span>
<span class="t" style="left:2093px;top:839.65px;font-size:21.2px;line-height:21.2px;color:#474747;font-weight:400;">Sensitive</span>
<span class="t" style="left:2333px;top:839.65px;font-size:21.2px;line-height:21.2px;color:#474747;font-weight:400;">Confidential - GDPR</span>
<svg style="left:2295px;top:847px" width="13" height="8" viewBox="0 0 13 8"><path d="M0.5 0.5 L12.5 0.5 L6.5 6.5 Z" fill="#7a7a7a"/></svg>
<div style="left:165px;top:870px;width:2px;height:36px;background:#d6d6d6"></div>
<div style="left:454px;top:870px;width:2px;height:36px;background:#d6d6d6"></div>
<div style="left:574px;top:870px;width:2px;height:36px;background:#d6d6d6"></div>
<div style="left:774px;top:870px;width:2px;height:36px;background:#d6d6d6"></div>
<div style="left:894px;top:870px;width:2px;height:36px;background:#d6d6d6"></div>
<div style="left:1094px;top:870px;width:2px;height:36px;background:#d6d6d6"></div>
<div style="left:1294px;top:870px;width:2px;height:36px;background:#d6d6d6"></div>
<div style="left:1494px;top:870px;width:2px;height:36px;background:#d6d6d6"></div>
<div style="left:2080px;top:870px;width:2px;height:36px;background:#d6d6d6"></div>
<div style="left:2320px;top:870px;width:2px;height:36px;background:#d6d6d6"></div>
<div style="left:2580px;top:870px;width:2px;height:36px;background:#d6d6d6"></div>
<div style="left:165px;top:906px;width:2417px;height:2px;background:#d6d6d6"></div>
<span class="t" style="left:178px;top:877.65px;font-size:21.2px;line-height:21.2px;color:#474747;font-weight:400;">ClosedDate</span>
<span class="t" style="left:587px;top:877.65px;font-size:21.2px;line-height:21.2px;color:#474747;font-weight:400;">datetime</span>
<span class="t" style="left:1107px;top:877.65px;font-size:21.2px;line-height:21.2px;color:#474747;font-weight:400;">0</span>
<span class="t" style="left:1307px;top:877.65px;font-size:21.2px;line-height:21.2px;color:#474747;font-weight:400;">0</span>
<span class="t" style="left:1507px;top:877.65px;font-size:21.2px;line-height:21.2px;color:#474747;font-weight:400;">Y [Nonsensitive]</span>
<span class="t" style="left:2093px;top:877.65px;font-size:21.2px;line-height:21.2px;color:#474747;font-weight:400;">Nonsensitive</span>
<span class="t" style="left:2333px;top:877.65px;font-size:21.2px;line-height:21.2px;color:#474747;font-weight:400;">Public</span>
<svg style="left:2295px;top:885px" width="13" height="8" viewBox="0 0 13 8"><path d="M0.5 0.5 L12.5 0.5 L6.5 6.5 Z" fill="#7a7a7a"/></svg>
<div style="left:165px;top:908px;width:2px;height:36px;background:#d6d6d6"></div>
<div style="left:454px;top:908px;width:2px;height:36px;background:#d6d6d6"></div>
<div style="left:574px;top:908px;width:2px;height:36px;background:#d6d6d6"></div>
<div style="left:774px;top:908px;width:2px;height:36px;background:#d6d6d6"></div>
<div style="left:894px;top:908px;width:2px;height:36px;background:#d6d6d6"></div>
<div style="left:1094px;top:908px;width:2px;height:36px;background:#d6d6d6"></div>
<div style="left:1294px;top:908px;width:2px;height:36px;background:#d6d6d6"></div>
<div style="left:1494px;top:908px;width:2px;height:36px;background:#d6d6d6"></div>
<div style="left:2080px;top:908px;width:2px;height:36px;background:#d6d6d6"></div>
<div style="left:2320px;top:908px;width:2px;height:36px;background:#d6d6d6"></div>
<div style="left:2580px;top:908px;width:2px;height:36px;background:#d6d6d6"></div>
<div style="left:165px;top:944px;width:2417px;height:2px;background:#d6d6d6"></div>
<span class="t" style="left:178px;top:915.65px;font-size:21.2px;line-height:21.2px;color:#474747;font-weight:400;">CommentCount</span>
<span class="t" style="left:587px;top:915.65px;font-size:21.2px;line-height:21.2px;color:#474747;font-weight:400;">int</span>
<span class="t" style="left:1107px;top:915.65px;font-size:21.2px;line-height:21.2px;color:#474747;font-weight:400;">0</span>
<span class="t" style="left:1307px;top:915.65px;font-size:21.2px;line-height:21.2px;color:#474747;font-weight:400;">0</span>
<span class="t" style="left:1507px;top:915.65px;font-size:21.2px;line-height:21.2px;color:#474747;font-weight:400;">Y [Nonsensitive]</span>
<span class="t" style="left:2093px;top:915.65px;font-size:21.2px;line-height:21.2px;color:#474747;font-weight:400;">Nonsensitive</span>
<span class="t" style="left:2333px;top:915.65px;font-size:21.2px;line-height:21.2px;color:#474747;font-weight:400;">Public</span>
<svg style="left:2295px;top:923px" width="13" height="8" viewBox="0 0 13 8"><path d="M0.5 0.5 L12.5 0.5 L6.5 6.5 Z" fill="#7a7a7a"/></svg>
<div style="left:165px;top:946px;width:2px;height:36px;background:#d6d6d6"></div>
<div style="left:454px;top:946px;width:2px;height:36px;background:#d6d6d6"></div>
<div style="left:574px;top:946px;width:2px;height:36px;background:#d6d6d6"></div>
<div style="left:774px;top:946px;width:2px;height:36px;background:#d6d6d6"></div>
<div style="left:894px;top:946px;width:2px;height:36px;background:#d6d6d6"></div>
<div style="left:1094px;top:946px;width:2px;height:36px;background:#d6d6d6"></div>
<div style="left:1294px;top:946px;width:2px;height:36px;background:#d6d6d6"></div>
<div style="left:1494px;top:946px;width:2px;height:36px;background:#d6d6d6"></div>
<div style="left:2080px;top:946px;width:2px;height:36px;background:#d6d6d6"></div>
<div style="left:2320px;top:946px;width:2px;height:36px;background:#d6d6d6"></div>
<div style="left:2580px;top:946px;width:2px;height:36px;background:#d6d6d6"></div>
<div style="left:165px;top:982px;width:2417px;height:2px;background:#d6d6d6"></div>
<span class="t" style="left:178px;top:953.65px;font-size:21.2px;line-height:21.2px;color:#474747;font-weight:400;">CommunityOwnedDate</span>
<span class="t" style="left:587px;top:953.65px;font-size:21.2px;line-height:21.2px;color:#474747;font-weight:400;">datetime</span>
<span class="t" style="left:1107px;top:953.65px;font-size:21.2px;line-height:21.2px;color:#474747;font-weight:400;">0</span>
<span class="t" style="left:1307px;top:953.65px;font-size:21.2px;line-height:21.2px;color:#474747;font-weight:400;">0</span>
<span class="t" style="left:1507px;top:953.65px;font-size:21.2px;line-height:21.2px;color:#474747;font-weight:400;">Y [Nonsensitive]</span>
<span class="t" style="left:2093px;top:953.65px;font-size:21.2px;line-height:21.2px;color:#474747;font-weight:400;">Nonsensitive</span>
<span class="t" style="left:2333px;top:953.65px;font-size:21.2px;line-height:21.2px;color:#474747;font-weight:400;">Public</span>
<svg style="left:2295px;top:961px" width="13" height="8" viewBox="0 0 13 8"><path d="M0.5 0.5 L12.5 0.5 L6.5 6.5 Z" fill="#7a7a7a"/></svg>
<div style="left:165px;top:984px;width:2px;height:36px;background:#d6d6d6"></div>
<div style="left:454px;top:984px;width:2px;height:36px;background:#d6d6d6"></div>
<div style="left:574px;top:984px;width:2px;height:36px;background:#d6d6d6"></div>
<div style="left:774px;top:984px;width:2px;height:36px;background:#d6d6d6"></div>
<div style="left:894px;top:984px;width:2px;height:36px;background:#d6d6d6"></div>
<div style="left:1094px;top:984px;width:2px;height:36px;background:#d6d6d6"></div>
<div style="left:1294px;top:984px;width:2px;height:36px;background:#d6d6d6"></div>
<div style="left:1494px;top:984px;width:2px;height:36px;background:#d6d6d6"></div>
<div style="left:2080px;top:984px;width:2px;height:36px;background:#d6d6d6"></div>
<div style="left:2320px;top:984px;width:2px;height:36px;background:#d6d6d6"></div>
<div style="left:2580px;top:984px;width:2px;height:36px;background:#d6d6d6"></div>
<div style="left:165px;top:1020px;width:2417px;height:2px;background:#d6d6d6"></div>
<span class="t" style="left:178px;top:991.65px;font-size:21.2px;line-height:21.2px;color:#474747;font-weight:400;">CreationDate</span>
<span class="t" style="left:587px;top:991.65px;font-size:21.2px;line-height:21.2px;color:#474747;font-weight:400;">datetime</span>
<span class="t" style="left:1107px;top:991.65px;font-size:21.2px;line-height:21.2px;color:#474747;font-weight:400;">0</span>
<span class="t" style="left:1307px;top:991.65px;font-size:21.2px;line-height:21.2px;color:#474747;font-weight:400;">0</span>
<span class="t" style="left:1507px;top:991.65px;font-size:21.2px;line-height:21.2px;color:#474747;font-weight:400;">Y [Nonsensitive]</span>
<span class="t" style="left:2093px;top:991.65px;font-size:21.2px;line-height:21.2px;color:#474747;font-weight:400;">Nonsensitive</span>
<span class="t" style="left:2333px;top:991.65px;font-size:21.2px;line-height:21.2px;color:#474747;font-weight:400;">Public</span>
<svg style="left:2295px;top:999px" width="13" height="8" viewBox="0 0 13 8"><path d="M0.5 0.5 L12.5 0.5 L6.5 6.5 Z" fill="#7a7a7a"/></svg>
<div style="left:165px;top:1022px;width:2px;height:36px;background:#d6d6d6"></div>
<div style="left:454px;top:1022px;width:2px;height:36px;background:#d6d6d6"></div>
<div style="left:574px;top:1022px;width:2px;height:36px;background:#d6d6d6"></div>
<div style="left:774px;top:1022px;width:2px;height:36px;background:#d6d6d6"></div>
<div style="left:894px;top:1022px;width:2px;height:36px;background:#d6d6d6"></div>
<div style="left:1094px;top:1022px;width:2px;height:36px;background:#d6d6d6"></div>
<div style="left:1294px;top:1022px;width:2px;height:36px;background:#d6d6d6"></div>
<div style="left:1494px;top:1022px;width:2px;height:36px;background:#d6d6d6"></div>
<div style="left:2080px;top:1022px;width:2px;height:36px;background:#d6d6d6"></div>
<div style="left:2320px;top:1022px;width:2px;height:36px;background:#d6d6d6"></div>
<div style="left:2580px;top:1022px;width:2px;height:36px;background:#d6d6d6"></div>
<div style="left:165px;top:1058px;width:2417px;height:2px;background:#d6d6d6"></div>
<span class="t" style="left:178px;top:1029.65px;font-size:21.2px;line-height:21.2px;color:#474747;font-weight:400;">FavoriteCount</span>
<span class="t" style="left:587px;top:1029.65px;font-size:21.2px;line-height:21.2px;color:#474747;font-weight:400;">int</span>
<span class="t" style="left:1107px;top:1029.65px;font-size:21.2px;line-height:21.2px;color:#474747;font-weight:400;">0</span>
<span class="t" style="left:1307px;top:1029.65px;font-size:21.2px;line-height:21.2px;color:#474747;font-weight:400;">0</span>
<span class="t" style="left:1507px;top:1029.65px;font-size:21.2px;line-height:21.2px;color:#474747;font-weight:400;">Y [Nonsensitive]</span>
<span class="t" style="left:2093px;top:1029.65px;font-size:21.2px;line-height:21.2px;color:#474747;font-weight:400;">Nonsensitive</span>
<span class="t" style="left:2333px;top:1029.65px;font-size:21.2px;line-height:21.2px;color:#474747;font-weight:400;">Public</span>
<svg style="left:2295px;top:1037px" width="13" height="8" viewBox="0 0 13 8"><path d="M0.5 0.5 L12.5 0.5 L6.5 6.5 Z" fill="#7a7a7a"/></svg>
<div style="left:165px;top:1060px;width:2px;height:36px;background:#d6d6d6"></div>
<div style="left:454px;top:1060px;width:2px;height:36px;background:#d6d6d6"></div>
<div style="left:574px;top:1060px;width:2px;height:36px;background:#d6d6d6"></div>
<div style="left:774px;top:1060px;width:2px;height:36px;background:#d6d6d6"></div>
<div style="left:894px;top:1060px;width:2px;height:36px;background:#d6d6d6"></div>
<div style="left:1094px;top:1060px;width:2px;height:36px;background:#d6d6d6"></div>
<div style="left:1294px;top:1060px;width:2px;height:36px;background:#d6d6d6"></div>
<div style="left:1494px;top:1060px;width:2px;height:36px;background:#d6d6d6"></div>
<div style="left:2080px;top:1060px;width:2px;height:36px;background:#d6d6d6"></div>
<div style="left:2320px;top:1060px;width:2px;height:36px;background:#d6d6d6"></div>
<div style="left:2580px;top:1060px;width:2px;height:36px;background:#d6d6d6"></div>
<div style="left:165px;top:1096px;width:2417px;height:2px;background:#d6d6d6"></div>
<span class="t" style="left:178px;top:1067.65px;font-size:21.2px;line-height:21.2px;color:#474747;font-weight:400;">LastActivityDate</span>
<span class="t" style="left:587px;top:1067.65px;font-size:21.2px;line-height:21.2px;color:#474747;font-weight:400;">datetime</span>
<span class="t" style="left:1107px;top:1067.65px;font-size:21.2px;line-height:21.2px;color:#474747;font-weight:400;">0</span>
<span class="t" style="left:1307px;top:1067.65px;font-size:21.2px;line-height:21.2px;color:#474747;font-weight:400;">0</span>
<span class="t" style="left:1507px;top:1067.65px;font-size:21.2px;line-height:21.2px;color:#474747;font-weight:400;">Y [Nonsensitive]</span>
<span class="t" style="left:2093px;top:1067.65px;font-size:21.2px;line-height:21.2px;color:#474747;font-weight:400;">Nonsensitive</span>
<span class="t" style="left:2333px;top:1067.65px;font-size:21.2px;line-height:21.2px;color:#474747;font-weight:400;">Public</span>
<svg style="left:2295px;top:1075px" width="13" height="8" viewBox="0 0 13 8"><path d="M0.5 0.5 L12.5 0.5 L6.5 6.5 Z" fill="#7a7a7a"/></svg>
<div style="left:165px;top:1098px;width:2px;height:36px;background:#d6d6d6"></div>
<div style="left:454px;top:1098px;width:2px;height:36px;background:#d6d6d6"></div>
<div style="left:574px;top:1098px;width:2px;height:36px;background:#d6d6d6"></div>
<div style="left:774px;top:1098px;width:2px;height:36px;background:#d6d6d6"></div>
<div style="left:894px;top:1098px;width:2px;height:36px;background:#d6d6d6"></div>
<div style="left:1094px;top:1098px;width:2px;height:36px;background:#d6d6d6"></div>
<div style="left:1294px;top:1098px;width:2px;height:36px;background:#d6d6d6"></div>
<div style="left:1494px;top:1098px;width:2px;height:36px;background:#d6d6d6"></div>
<div style="left:2080px;top:1098px;width:2px;height:36px;background:#d6d6d6"></div>
<div style="left:2320px;top:1098px;width:2px;height:36px;background:#d6d6d6"></div>
<div style="left:2580px;top:1098px;width:2px;height:36px;background:#d6d6d6"></div>
<div style="left:165px;top:1134px;width:2417px;height:2px;background:#d6d6d6"></div>
<span class="t" style="left:178px;top:1105.65px;font-size:21.2px;line-height:21.2px;color:#474747;font-weight:400;">LastEditDate</span>
<span class="t" style="left:587px;top:1105.65px;font-size:21.2px;line-height:21.2px;color:#474747;font-weight:400;">datetime</span>
<span class="t" style="left:1107px;top:1105.65px;font-size:21.2px;line-height:21.2px;color:#474747;font-weight:400;">0</span>
<span class="t" style="left:1307px;top:1105.65px;font-size:21.2px;line-height:21.2px;color:#474747;font-weight:400;">0</span>
<span class="t" style="left:1507px;top:1105.65px;font-size:21.2px;line-height:21.2px;color:#474747;font-weight:400;">Y [Nonsensitive]</span>
<span class="t" style="left:2093px;top:1105.65px;font-size:21.2px;line-height:21.2px;color:#474747;font-weight:400;">Nonsensitive</span>
<span class="t" style="left:2333px;top:1105.65px;font-size:21.2px;line-height:21.2px;color:#474747;font-weight:400;">Public</span>
<svg style="left:2295px;top:1113px" width="13" height="8" viewBox="0 0 13 8"><path d="M0.5 0.5 L12.5 0.5 L6.5 6.5 Z" fill="#7a7a7a"/></svg>
<div style="left:165px;top:1136px;width:2px;height:36px;background:#d6d6d6"></div>
<div style="left:454px;top:1136px;width:2px;height:36px;background:#d6d6d6"></div>
<div style="left:574px;top:1136px;width:2px;height:36px;background:#d6d6d6"></div>
<div style="left:774px;top:1136px;width:2px;height:36px;background:#d6d6d6"></div>
<div style="left:894px;top:1136px;width:2px;height:36px;background:#d6d6d6"></div>
<div style="left:1094px;top:1136px;width:2px;height:36px;background:#d6d6d6"></div>
<div style="left:1294px;top:1136px;width:2px;height:36px;background:#d6d6d6"></div>
<div style="left:1494px;top:1136px;width:2px;height:36px;background:#d6d6d6"></div>
<div style="left:2080px;top:1136px;width:2px;height:36px;background:#d6d6d6"></div>
<div style="left:2320px;top:1136px;width:2px;height:36px;background:#d6d6d6"></div>
<div style="left:2580px;top:1136px;width:2px;height:36px;background:#d6d6d6"></div>
<div style="left:165px;top:1172px;width:2417px;height:2px;background:#d6d6d6"></div>
<span class="t" style="left:178px;top:1143.65px;font-size:21.2px;line-height:21.2px;color:#474747;font-weight:400;">LastEditorDisplayName</span>
<span class="t" style="left:587px;top:1143.65px;font-size:21.2px;line-height:21.2px;color:#474747;font-weight:400;">nvarchar(40)</span>
<span class="t" style="left:1107px;top:1143.65px;font-size:21.2px;line-height:21.2px;color:#474747;font-weight:400;">0</span>
<span class="t" style="left:1307px;top:1143.65px;font-size:21.2px;line-height:21.2px;color:#474747;font-weight:400;">0</span>
<span class="t" style="left:1507px;top:1143.65px;font-size:21.2px;line-height:21.2px;color:#3a3a3a;font-weight:700;letter-spacing:1.2px">N [Sensitive]</span>
<span class="t" style="left:2093px;top:1143.65px;font-size:21.2px;line-height:21.2px;color:#474747;font-weight:400;">Sensitive</span>
<span class="t" style="left:2333px;top:1143.65px;font-size:21.2px;line-height:21.2px;color:#474747;font-weight:400;">Confidential - GDPR</span>
<svg style="left:2295px;top:1151px" width="13" height="8" viewBox="0 0 13 8"><path d="M0.5 0.5 L12.5 0.5 L6.5 6.5 Z" fill="#7a7a7a"/></svg>
<div style="left:165px;top:1174px;width:2px;height:36px;background:#d6d6d6"></div>
<div style="left:454px;top:1174px;width:2px;height:36px;background:#d6d6d6"></div>
<div style="left:574px;top:1174px;width:2px;height:36px;background:#d6d6d6"></div>
<div style="left:774px;top:1174px;width:2px;height:36px;background:#d6d6d6"></div>
<div style="left:894px;top:1174px;width:2px;height:36px;background:#d6d6d6"></div>
<div style="left:1094px;top:1174px;width:2px;height:36px;background:#d6d6d6"></div>
<div style="left:1294px;top:1174px;width:2px;height:36px;background:#d6d6d6"></div>
<div style="left:1494px;top:1174px;width:2px;height:36px;background:#d6d6d6"></div>
<div style="left:2080px;top:1174px;width:2px;height:36px;background:#d6d6d6"></div>
<div style="left:2320px;top:1174px;width:2px;height:36px;background:#d6d6d6"></div>
<div style="left:2580px;top:1174px;width:2px;height:36px;background:#d6d6d6"></div>
<div style="left:165px;top:1210px;width:2417px;height:2px;background:#d6d6d6"></div>
<span class="t" style="left:178px;top:1181.65px;font-size:21.2px;line-height:21.2px;color:#474747;font-weight:400;">LastEditorUserId</span>
<span class="t" style="left:587px;top:1181.65px;font-size:21.2px;line-height:21.2px;color:#474747;font-weight:400;">int</span>
<span class="t" style="left:1107px;top:1181.65px;font-size:21.2px;line-height:21.2px;color:#474747;font-weight:400;">0</span>
<span class="t" style="left:1307px;top:1181.65px;font-size:21.2px;line-height:21.2px;color:#474747;font-weight:400;">0</span>
<span class="t" style="left:1507px;top:1181.65px;font-size:21.2px;line-height:21.2px;color:#474747;font-weight:400;">Y [Nonsensitive]</span>
<span class="t" style="left:2093px;top:1181.65px;font-size:21.2px;line-height:21.2px;color:#474747;font-weight:400;">Nonsensitive</span>
<span class="t" style="left:2333px;top:1181.65px;font-size:21.2px;line-height:21.2px;color:#474747;font-weight:400;">Public</span>
<svg style="left:2295px;top:1189px" width="13" height="8" viewBox="0 0 13 8"><path d="M0.5 0.5 L12.5 0.5 L6.5 6.5 Z" fill="#7a7a7a"/></svg>
<div style="left:165px;top:1212px;width:2px;height:36px;background:#d6d6d6"></div>
<div style="left:454px;top:1212px;width:2px;height:36px;background:#d6d6d6"></div>
<div style="left:574px;top:1212px;width:2px;height:36px;background:#d6d6d6"></div>
<div style="left:774px;top:1212px;width:2px;height:36px;background:#d6d6d6"></div>
<div style="left:894px;top:1212px;width:2px;height:36px;background:#d6d6d6"></div>
<div style="left:1094px;top:1212px;width:2px;height:36px;background:#d6d6d6"></div>
<div style="left:1294px;top:1212px;width:2px;height:36px;background:#d6d6d6"></div>
<div style="left:1494px;top:1212px;width:2px;height:36px;background:#d6d6d6"></div>
<div style="left:2080px;top:1212px;width:2px;height:36px;background:#d6d6d6"></div>
<div style="left:2320px;top:1212px;width:2px;height:36px;background:#d6d6d6"></div>
<div style="left:2580px;top:1212px;width:2px;height:36px;background:#d6d6d6"></div>
<div style="left:165px;top:1248px;width:2417px;height:2px;background:#d6d6d6"></div>
<span class="t" style="left:178px;top:1219.65px;font-size:21.2px;line-height:21.2px;color:#474747;font-weight:400;">OwnerUserId</span>
<span class="t" style="left:587px;top:1219.65px;font-size:21.2px;line-height:21.2px;color:#474747;font-weight:400;">int</span>
<span class="t" style="left:1107px;top:1219.65px;font-size:21.2px;line-height:21.2px;color:#474747;font-weight:400;">0</span>
<span class="t" style="left:1307px;top:1219.65px;font-size:21.2px;line-height:21.2px;color:#474747;font-weight:400;">0</span>
<span class="t" style="left:1507px;top:1219.65px;font-size:21.2px;line-height:21.2px;color:#474747;font-weight:400;">Y [Nonsensitive]</span>
<span class="t" style="left:2093px;top:1219.65px;font-size:21.2px;line-height:21.2px;color:#474747;font-weight:400;">Nonsensitive</span>
<span class="t" style="left:2333px;top:1219.65px;font-size:21.2px;line-height:21.2px;color:#474747;font-weight:400;">Public</span>
<svg style="left:2295px;top:1227px" width="13" height="8" viewBox="0 0 13 8"><path d="M0.5 0.5 L12.5 0.5 L6.5 6.5 Z" fill="#7a7a7a"/></svg>
<div style="left:165px;top:1250px;width:2px;height:36px;background:#d6d6d6"></div>
<div style="left:454px;top:1250px;width:2px;height:36px;background:#d6d6d6"></div>
<div style="left:574px;top:1250px;width:2px;height:36px;background:#d6d6d6"></div>
<div style="left:774px;top:1250px;width:2px;height:36px;background:#d6d6d6"></div>
<div style="left:894px;top:1250px;width:2px;height:36px;background:#d6d6d6"></div>
<div style="left:1094px;top:1250px;width:2px;height:36px;background:#d6d6d6"></div>
<div style="left:1294px;top:1250px;width:2px;height:36px;background:#d6d6d6"></div>
<div style="left:1494px;top:1250px;width:2px;height:36px;background:#d6d6d6"></div>
<div style="left:2080px;top:1250px;width:2px;height:36px;background:#d6d6d6"></div>
<div style="left:2320px;top:1250px;width:2px;height:36px;background:#d6d6d6"></div>
<div style="left:2580px;top:1250px;width:2px;height:36px;background:#d6d6d6"></div>
<div style="left:165px;top:1286px;width:2417px;height:2px;background:#d6d6d6"></div>
<span class="t" style="left:178px;top:1257.65px;font-size:21.2px;line-height:21.2px;color:#474747;font-weight:400;">ParentId</span>
<span class="t" style="left:587px;top:1257.65px;font-size:21.2px;line-height:21.2px;color:#474747;font-weight:400;">int</span>
<span class="t" style="left:1107px;top:1257.65px;font-size:21.2px;line-height:21.2px;color:#474747;font-weight:400;">0</span>
<span class="t" style="left:1307px;top:1257.65px;font-size:21.2px;line-height:21.2px;color:#474747;font-weight:400;">0</span>
<span class="t" style="left:1507px;top:1257.65px;font-size:21.2px;line-height:21.2px;color:#474747;font-weight:400;">Y [Nonsensitive]</span>
<span class="t" style="left:2093px;top:1257.65px;font-size:21.2px;line-height:21.2px;color:#474747;font-weight:400;">Nonsensitive</span>
<span class="t" style="left:2333px;top:1257.65px;font-size:21.2px;line-height:21.2px;color:#474747;font-weight:400;">Public</span>
<svg style="left:2295px;top:1265px" width="13" height="8" viewBox="0 0 13 8"><path d="M0.5 0.5 L12.5 0.5 L6.5 6.5 Z" fill="#7a7a7a"/></svg>
<div style="left:165px;top:1288px;width:2px;height:36px;background:#d6d6d6"></div>
<div style="left:454px;top:1288px;width:2px;height:36px;background:#d6d6d6"></div>
<div style="left:574px;top:1288px;width:2px;height:36px;background:#d6d6d6"></div>
<div style="left:774px;top:1288px;width:2px;height:36px;background:#d6d6d6"></div>
<div style="left:894px;top:1288px;width:2px;height:36px;background:#d6d6d6"></div>
<div style="left:1094px;top:1288px;width:2px;height:36px;background:#d6d6d6"></div>
<div style="left:1294px;top:1288px;width:2px;height:36px;background:#d6d6d6"></div>
<div style="left:1494px;top:1288px;width:2px;height:36px;background:#d6d6d6"></div>
<div style="left:2080px;top:1288px;width:2px;height:36px;background:#d6d6d6"></div>
<div style="left:2320px;top:1288px;width:2px;height:36px;background:#d6d6d6"></div>
<div style="left:2580px;top:1288px;width:2px;height:36px;background:#d6d6d6"></div>
<div style="left:165px;top:1324px;width:2417px;height:2px;background:#d6d6d6"></div>
<span class="t" style="left:178px;top:1295.65px;font-size:21.2px;line-height:21.2px;color:#474747;font-weight:400;">PostTypeId</span>
<span class="t" style="left:587px;top:1295.65px;font-size:21.2px;line-height:21.2px;color:#474747;font-weight:400;">int</span>
<span class="t" style="left:1107px;top:1295.65px;font-size:21.2px;line-height:21.2px;color:#474747;font-weight:400;">0</span>
<span class="t" style="left:1307px;top:1295.65px;font-size:21.2px;line-height:21.2px;color:#474747;font-weight:400;">0</span>
<span class="t" style="left:1507px;top:1295.65px;font-size:21.2px;line-height:21.2px;color:#474747;font-weight:400;">Y [Nonsensitive]</span>
<span class="t" style="left:2093px;top:1295.65px;font-size:21.2px;line-height:21.2px;color:#474747;font-weight:400;">Nonsensitive</span>
<span class="t" style="left:2333px;top:1295.65px;font-size:21.2px;line-height:21.2px;color:#474747;font-weight:400;">Public</span>
<svg style="left:2295px;top:1303px" width="13" height="8" viewBox="0 0 13 8"><path d="M0.5 0.5 L12.5 0.5 L6.5 6.5 Z" fill="#7a7a7a"/></svg>
<div style="left:165px;top:1326px;width:2px;height:36px;background:#d6d6d6"></div>
<div style="left:454px;top:1326px;width:2px;height:36px;background:#d6d6d6"></div>
<div style="left:574px;top:1326px;width:2px;height:36px;background:#d6d6d6"></div>
<div style="left:774px;top:1326px;width:2px;height:36px;background:#d6d6d6"></div>
<div style="left:894px;top:1326px;width:2px;height:36px;background:#d6d6d6"></div>
<div style="left:1094px;top:1326px;width:2px;height:36px;background:#d6d6d6"></div>
<div style="left:1294px;top:1326px;width:2px;height:36px;background:#d6d6d6"></div>
<div style="left:1494px;top:1326px;width:2px;height:36px;background:#d6d6d6"></div>
<div style="left:2080px;top:1326px;width:2px;height:36px;background:#d6d6d6"></div>
<div style="left:2320px;top:1326px;width:2px;height:36px;background:#d6d6d6"></div>
<div style="left:2580px;top:1326px;width:2px;height:36px;background:#d6d6d6"></div>
<div style="left:165px;top:1362px;width:2417px;height:2px;background:#d6d6d6"></div>
<span class="t" style="left:178px;top:1333.65px;font-size:21.2px;line-height:21.2px;color:#474747;font-weight:400;">Score</span>
<span class="t" style="left:587px;top:1333.65px;font-size:21.2px;line-height:21.2px;color:#474747;font-weight:400;">int</span>
<span class="t" style="left:1107px;top:1333.65px;font-size:21.2px;line-height:21.2px;color:#474747;font-weight:400;">0</span>
<span class="t" style="left:1307px;top:1333.65px;font-size:21.2px;line-height:21.2px;color:#474747;font-weight:400;">0</span>
<span class="t" style="left:1507px;top:1333.65px;font-size:21.2px;line-height:21.2px;color:#474747;font-weight:400;">Y [Nonsensitive]</span>
<span class="t" style="left:2093px;top:1333.65px;font-size:21.2px;line-height:21.2px;color:#474747;font-weight:400;">Nonsensitive</span>
<span class="t" style="left:2333px;top:1333.65px;font-size:21.2px;line-height:21.2px;color:#474747;font-weight:400;">Public</span>
<svg style="left:2295px;top:1341px" width="13" height="8" viewBox="0 0 13 8"><path d="M0.5 0.5 L12.5 0.5 L6.5 6.5 Z" fill="#7a7a7a"/></svg>
<div style="left:165px;top:1364px;width:2px;height:36px;background:#d6d6d6"></div>
<div style="left:454px;top:1364px;width:2px;height:36px;background:#d6d6d6"></div>
<div style="left:574px;top:1364px;width:2px;height:36px;background:#d6d6d6"></div>
<div style="left:774px;top:1364px;width:2px;height:36px;background:#d6d6d6"></div>
<div style="left:894px;top:1364px;width:2px;height:36px;background:#d6d6d6"></div>
<div style="left:1094px;top:1364px;width:2px;height:36px;background:#d6d6d6"></div>
<div style="left:1294px;top:1364px;width:2px;height:36px;background:#d6d6d6"></div>
<div style="left:1494px;top:1364px;width:2px;height:36px;background:#d6d6d6"></div>
<div style="left:2080px;top:1364px;width:2px;height:36px;background:#d6d6d6"></div>
<div style="left:2320px;top:1364px;width:2px;height:36px;background:#d6d6d6"></div>
<div style="left:2580px;top:1364px;width:2px;height:36px;background:#d6d6d6"></div>
<div style="left:165px;top:1400px;width:2417px;height:2px;background:#d6d6d6"></div>
<span class="t" style="left:178px;top:1371.65px;font-size:21.2px;line-height:21.2px;color:#474747;font-weight:400;">Tags</span>
<span class="t" style="left:587px;top:1371.65px;font-size:21.2px;line-height:21.2px;color:#474747;font-weight:400;">nvarchar(150)</span>
<span class="t" style="left:1107px;top:1371.65px;font-size:21.2px;line-height:21.2px;color:#474747;font-weight:400;">0</span>
<span class="t" style="left:1307px;top:1371.65px;font-size:21.2px;line-height:21.2px;color:#474747;font-weight:400;">0</span>
<span class="t" style="left:1507px;top:1371.65px;font-size:21.2px;line-height:21.2px;color:#474747;font-weight:400;">Y [Nonsensitive]</span>
<span class="t" style="left:2093px;top:1371.65px;font-size:21.2px;line-height:21.2px;color:#474747;font-weight:400;">Nonsensitive</span>
<span class="t" style="left:2333px;top:1371.65px;font-size:21.2px;line-height:21.2px;color:#474747;font-weight:400;">Public</span>
<svg style="left:2295px;top:1379px" width="13" height="8" viewBox="0 0 13 8"><path d="M0.5 0.5 L12.5 0.5 L6.5 6.5 Z" fill="#7a7a7a"/></svg>
<div style="left:165px;top:1402px;width:2px;height:36px;background:#d6d6d6"></div>
<div style="left:454px;top:1402px;width:2px;height:36px;background:#d6d6d6"></div>
<div style="left:574px;top:1402px;width:2px;height:36px;background:#d6d6d6"></div>
<div style="left:774px;top:1402px;width:2px;height:36px;background:#d6d6d6"></div>
<div style="left:894px;top:1402px;width:2px;height:36px;background:#d6d6d6"></div>
<div style="left:1094px;top:1402px;width:2px;height:36px;background:#d6d6d6"></div>
<div style="left:1294px;top:1402px;width:2px;height:36px;background:#d6d6d6"></div>
<div style="left:1494px;top:1402px;width:2px;height:36px;background:#d6d6d6"></div>
<div style="left:2080px;top:1402px;width:2px;height:36px;background:#d6d6d6"></div>
<div style="left:2320px;top:1402px;width:2px;height:36px;background:#d6d6d6"></div>
<div style="left:2580px;top:1402px;width:2px;height:36px;background:#d6d6d6"></div>
<div style="left:165px;top:1438px;width:2417px;height:2px;background:#d6d6d6"></div>
<span class="t" style="left:178px;top:1409.65px;font-size:21.2px;line-height:21.2px;color:#474747;font-weight:400;">Title</span>
<span class="t" style="left:587px;top:1409.65px;font-size:21.2px;line-height:21.2px;color:#474747;font-weight:400;">nvarchar(250)</span>
<span class="t" style="left:1107px;top:1409.65px;font-size:21.2px;line-height:21.2px;color:#474747;font-weight:400;">0</span>
<span class="t" style="left:1307px;top:1409.65px;font-size:21.2px;line-height:21.2px;color:#474747;font-weight:400;">0</span>
<span class="t" style="left:1507px;top:1409.65px;font-size:21.2px;line-height:21.2px;color:#474747;font-weight:400;">Y [Nonsensitive]</span>
<span class="t" style="left:2093px;top:1409.65px;font-size:21.2px;line-height:21.2px;color:#474747;font-weight:400;">Nonsensitive</span>
<span class="t" style="left:2333px;top:1409.65px;font-size:21.2px;line-height:21.2px;color:#474747;font-weight:400;">Public</span>
<svg style="left:2295px;top:1417px" width="13" height="8" viewBox="0 0 13 8"><path d="M0.5 0.5 L12.5 0.5 L6.5 6.5 Z" fill="#7a7a7a"/></svg>
<div style="left:165px;top:1440px;width:2px;height:36px;background:#d6d6d6"></div>
<div style="left:454px;top:1440px;width:2px;height:36px;background:#d6d6d6"></div>
<div style="left:574px;top:1440px;width:2px;height:36px;background:#d6d6d6"></div>
<div style="left:774px;top:1440px;width:2px;height:36px;background:#d6d6d6"></div>
<div style="left:894px;top:1440px;width:2px;height:36px;background:#d6d6d6"></div>
<div style="left:1094px;top:1440px;width:2px;height:36px;background:#d6d6d6"></div>
<div style="left:1294px;top:1440px;width:2px;height:36px;background:#d6d6d6"></div>
<div style="left:1494px;top:1440px;width:2px;height:36px;background:#d6d6d6"></div>
<div style="left:2080px;top:1440px;width:2px;height:36px;background:#d6d6d6"></div>
<div style="left:2320px;top:1440px;width:2px;height:36px;background:#d6d6d6"></div>
<div style="left:2580px;top:1440px;width:2px;height:36px;background:#d6d6d6"></div>
<div style="left:129px;top:1476px;width:2453px;height:2px;background:#d6d6d6"></div>
<span class="t" style="left:178px;top:1447.65px;font-size:21.2px;line-height:21.2px;color:#474747;font-weight:400;">ViewCount</span>
<span class="t" style="left:587px;top:1447.65px;font-size:21.2px;line-height:21.2px;color:#474747;font-weight:400;">int</span>
<span class="t" style="left:1107px;top:1447.65px;font-size:21.2px;line-height:21.2px;color:#474747;font-weight:400;">0</span>
<span class="t" style="left:1307px;top:1447.65px;font-size:21.2px;line-height:21.2px;color:#474747;font-weight:400;">0</span>
<span class="t" style="left:1507px;top:1447.65px;font-size:21.2px;line-height:21.2px;color:#474747;font-weight:400;">Y [Nonsensitive]</span>
<span class="t" style="left:2093px;top:1447.65px;font-size:21.2px;line-height:21.2px;color:#474747;font-weight:400;">Nonsensitive</span>
<span class="t" style="left:2333px;top:1447.65px;font-size:21.2px;line-height:21.2px;color:#474747;font-weight:400;">Public</span>
<svg style="left:2295px;top:1455px" width="13" height="8" viewBox="0 0 13 8"><path d="M0.5 0.5 L12.5 0.5 L6.5 6.5 Z" fill="#7a7a7a"/></svg>
<div style="left:129px;top:1478px;width:2px;height:36px;background:#d6d6d6"></div>
<div style="left:454px;top:1478px;width:2px;height:36px;background:#d6d6d6"></div>
<div style="left:574px;top:1478px;width:2px;height:36px;background:#d6d6d6"></div>
<div style="left:774px;top:1478px;width:2px;height:36px;background:#d6d6d6"></div>
<div style="left:894px;top:1478px;width:2px;height:36px;background:#d6d6d6"></div>
<div style="left:1094px;top:1478px;width:2px;height:36px;background:#d6d6d6"></div>
<div style="left:1294px;top:1478px;width:2px;height:36px;background:#d6d6d6"></div>
<div style="left:1494px;top:1478px;width:2px;height:36px;background:#d6d6d6"></div>
<div style="left:2080px;top:1478px;width:2px;height:36px;background:#d6d6d6"></div>
<div style="left:2320px;top:1478px;width:2px;height:36px;background:#d6d6d6"></div>
<div style="left:2580px;top:1478px;width:2px;height:36px;background:#d6d6d6"></div>
<div style="left:129px;top:1514px;width:2453px;height:2px;background:#d6d6d6"></div>
<svg style="left:105.5px;top:1489px" width="12" height="18" viewBox="0 0 12 18"><path d="M1.5 1 L10 9 L1.5 17 L5.8 9 Z" fill="#1565d0"/></svg>
<span class="t" style="left:142px;top:1485.65px;font-size:21.2px;line-height:21.2px;color:#474747;font-weight:400;">PostTypes</span>
<span class="t" style="left:467px;top:1485.65px;font-size:21.2px;line-height:21.2px;color:#474747;font-weight:400;">dbo</span>
<span class="t" style="left:787px;top:1485.65px;font-size:21.2px;line-height:21.2px;color:#474747;font-weight:400;">yes</span>
<span class="t" style="left:907px;top:1485.65px;font-size:21.2px;line-height:21.2px;color:#474747;font-weight:400;">8</span>
<span class="t" style="left:1107px;top:1485.65px;font-size:21.2px;line-height:21.2px;color:#474747;font-weight:400;">0</span>
<span class="t" style="left:1307px;top:1485.65px;font-size:21.2px;line-height:21.2px;color:#474747;font-weight:400;">0</span>
<span class="t" style="left:1507px;top:1485.65px;font-size:21.2px;line-height:21.2px;color:#474747;font-weight:400;"><b style="font-weight:700;letter-spacing:4.2px;font-size:22.6px">2/</b><b style="font-weight:700;font-size:22.6px">2</b> columns classified</span>
<div style="left:129px;top:1516px;width:2px;height:36px;background:#d6d6d6"></div>
<div style="left:454px;top:1516px;width:2px;height:36px;background:#d6d6d6"></div>
<div style="left:574px;top:1516px;width:2px;height:36px;background:#d6d6d6"></div>
<div style="left:774px;top:1516px;width:2px;height:36px;background:#d6d6d6"></div>
<div style="left:894px;top:1516px;width:2px;height:36px;background:#d6d6d6"></div>
<div style="left:1094px;top:1516px;width:2px;height:36px;background:#d6d6d6"></div>
<div style="left:1294px;top:1516px;width:2px;height:36px;background:#d6d6d6"></div>
<div style="left:1494px;top:1516px;width:2px;height:36px;background:#d6d6d6"></div>
<div style="left:2080px;top:1516px;width:2px;height:36px;background:#d6d6d6"></div>
<div style="left:2320px;top:1516px;width:2px;height:36px;background:#d6d6d6"></div>
<div style="left:2580px;top:1516px;width:2px;height:36px;background:#d6d6d6"></div>
<div style="left:129px;top:1552px;width:2453px;height:2px;background:#d6d6d6"></div>
<svg style="left:101.5px;top:1532px" width="18" height="12" viewBox="0 0 18 12"><path d="M1 1.5 L9 10 L17 1.5 L9 5.8 Z" fill="#1565d0"/></svg>
<span class="t" style="left:142px;top:1523.65px;font-size:21.2px;line-height:21.2px;color:#474747;font-weight:400;">Users</span>
<span class="t" style="left:467px;top:1523.65px;font-size:21.2px;line-height:21.2px;color:#474747;font-weight:400;">dbo</span>
<span class="t" style="left:787px;top:1523.65px;font-size:21.2px;line-height:21.2px;color:#474747;font-weight:400;">yes</span>
<span class="t" style="left:907px;top:1523.65px;font-size:21.2px;line-height:21.2px;color:#474747;font-weight:400;">299398</span>
<span class="t" style="left:1107px;top:1523.65px;font-size:21.2px;line-height:21.2px;color:#474747;font-weight:400;">0</span>
<span class="t" style="left:1307px;top:1523.65px;font-size:21.2px;line-height:21.2px;color:#474747;font-weight:400;">0</span>
<span class="t" style="left:1507px;top:1523.65px;font-size:21.2px;line-height:21.2px;color:#474747;font-weight:400;"><b style="font-weight:700;letter-spacing:4.2px;font-size:22.6px">0/</b><b style="font-weight:700;font-size:22.6px">4</b> sensitive columns masked</span>
<div style="left:165px;top:1554px;width:2px;height:4px;background:#d6d6d6"></div>
<div style="left:454px;top:1554px;width:2px;height:4px;background:#d6d6d6"></div>
<div style="left:574px;top:1554px;width:2px;height:4px;background:#d6d6d6"></div>
<div style="left:774px;top:1554px;width:2px;height:4px;background:#d6d6d6"></div>
<div style="left:894px;top:1554px;width:2px;height:4px;background:#d6d6d6"></div>
<div style="left:1094px;top:1554px;width:2px;height:4px;background:#d6d6d6"></div>
<div style="left:1294px;top:1554px;width:2px;height:4px;background:#d6d6d6"></div>
<div style="left:1494px;top:1554px;width:2px;height:4px;background:#d6d6d6"></div>
<div style="left:2080px;top:1554px;width:2px;height:4px;background:#d6d6d6"></div>
<div style="left:2320px;top:1554px;width:2px;height:4px;background:#d6d6d6"></div>
<div style="left:2580px;top:1554px;width:2px;height:4px;background:#d6d6d6"></div>
<div style="left:54px;top:262px;width:2px;height:1296px;background:#d6d6d6"></div>
<svg style="left:18px;top:348px" width="24" height="18" viewBox="0 0 24 18"><path d="M2 9 L20 9 M13 2.5 L20 9 L13 15.5" fill="none" stroke="#1e6fd9" stroke-width="2"/></svg>
<div style="left:2640px;top:262px;width:33px;height:1296px;background:#f1f1f1"></div>
<div style="left:2640px;top:296px;width:33px;height:834px;background:#dadada"></div>
<svg style="left:2649px;top:272px" width="13" height="11" viewBox="0 0 13 11"><path d="M6.5 1 L12.5 10 L0.5 10 Z" fill="#606060"/></svg>
<svg style="left:2649px;top:1535px" width="13" height="11" viewBox="0 0 13 11"><path d="M0.5 1 L12.5 1 L6.5 10 Z" fill="#606060"/></svg>
<div style="left:9px;top:1578px;width:33px;height:41px;background:#ffffff;border:2px solid #b4b4b4"></div>
<span class="t" style="left:16px;top:1590.38px;font-size:21.4px;line-height:21.4px;color:#404040;font-weight:400;letter-spacing:0px">O</span>
<div style="left:49px;top:1578px;width:33px;height:41px;background:#ffffff;border:2px solid #b4b4b4"></div>
<span class="t" style="left:57px;top:1590.38px;font-size:21.4px;line-height:21.4px;color:#404040;font-weight:400;letter-spacing:0px">S</span>
<div style="left:89px;top:1578px;width:33px;height:41px;background:#ffffff;border:2px solid #b4b4b4"></div>
<span class="t" style="left:96px;top:1590.38px;font-size:21.4px;line-height:21.4px;color:#404040;font-weight:400;letter-spacing:0px">T</span>
<div style="left:129px;top:1578px;width:33px;height:41px;background:#ffffff;border:2px solid #b4b4b4"></div>
<span class="t" style="left:137px;top:1590.38px;font-size:21.4px;line-height:21.4px;color:#404040;font-weight:400;letter-spacing:0px">C</span>
<div style="left:175px;top:1578px;width:231px;height:41px;background:#ffffff;border:2px solid #b4b4b4"></div>
<span class="t" style="left:181px;top:1590.38px;font-size:21.4px;line-height:21.4px;color:#404040;font-weight:400;letter-spacing:0px">Bulk Remove Tables...</span>
<div style="left:419px;top:1578px;width:205px;height:41px;background:#ffffff;border:2px solid #b4b4b4"></div>
<span class="t" style="left:429px;top:1590.38px;font-size:21.4px;line-height:21.4px;color:#404040;font-weight:400;letter-spacing:0.33px">Export/Import Plan</span>
<div style="left:637px;top:1578px;width:173px;height:41px;background:#ffffff;border:2px solid #b4b4b4"></div>
<span class="t" style="left:665px;top:1590.38px;font-size:21.4px;line-height:21.4px;color:#404040;font-weight:400;letter-spacing:0px">Plan Report</span>
<div style="left:2556px;top:1578px;width:114px;height:41px;background:#ffffff;border:2px solid #b4b4b4"></div>
<span class="t" style="left:2578px;top:1590.38px;font-size:21.4px;line-height:21.4px;color:#404040;font-weight:400;letter-spacing:0.55px">Help...</span>
<div style="left:2px;top:1626px;width:2672px;height:2px;background:#b9b9b9"></div>
<div style="left:2px;top:1628px;width:2672px;height:44px;background:#f3f3f3"></div>
<div style="left:2px;top:1628px;width:2672px;height:2px;background:#ffffff"></div>
<div style="left:5px;top:1634px;width:599px;height:31px;background:#e6e6e6;border:2px solid #c2c2c2"></div>
<span class="t" style="left:613px;top:1638.68px;font-size:24px;line-height:24px;color:#3c3c3c;font-weight:400;">Masking Not Running</span>
<div style="left:2668px;top:1645.5px;width:4px;height:4px;background:#8c8c8c"></div>
<div style="left:2660px;top:1653.5px;width:4px;height:4px;background:#8c8c8c"></div>
<div style="left:2668px;top:1653.5px;width:4px;height:4px;background:#8c8c8c"></div>
<div style="left:2652px;top:1661.5px;width:4px;height:4px;background:#8c8c8c"></div>
<div style="left:2660px;top:1661.5px;width:4px;height:4px;background:#8c8c8c"></div>
<div style="left:2668px;top:1661.5px;width:4px;height:4px;background:#8c8c8c"></div>
<div style="left:0px;top:1671px;width:2674px;height:1px;background:#7a7a7a"></div>
</body></html>
